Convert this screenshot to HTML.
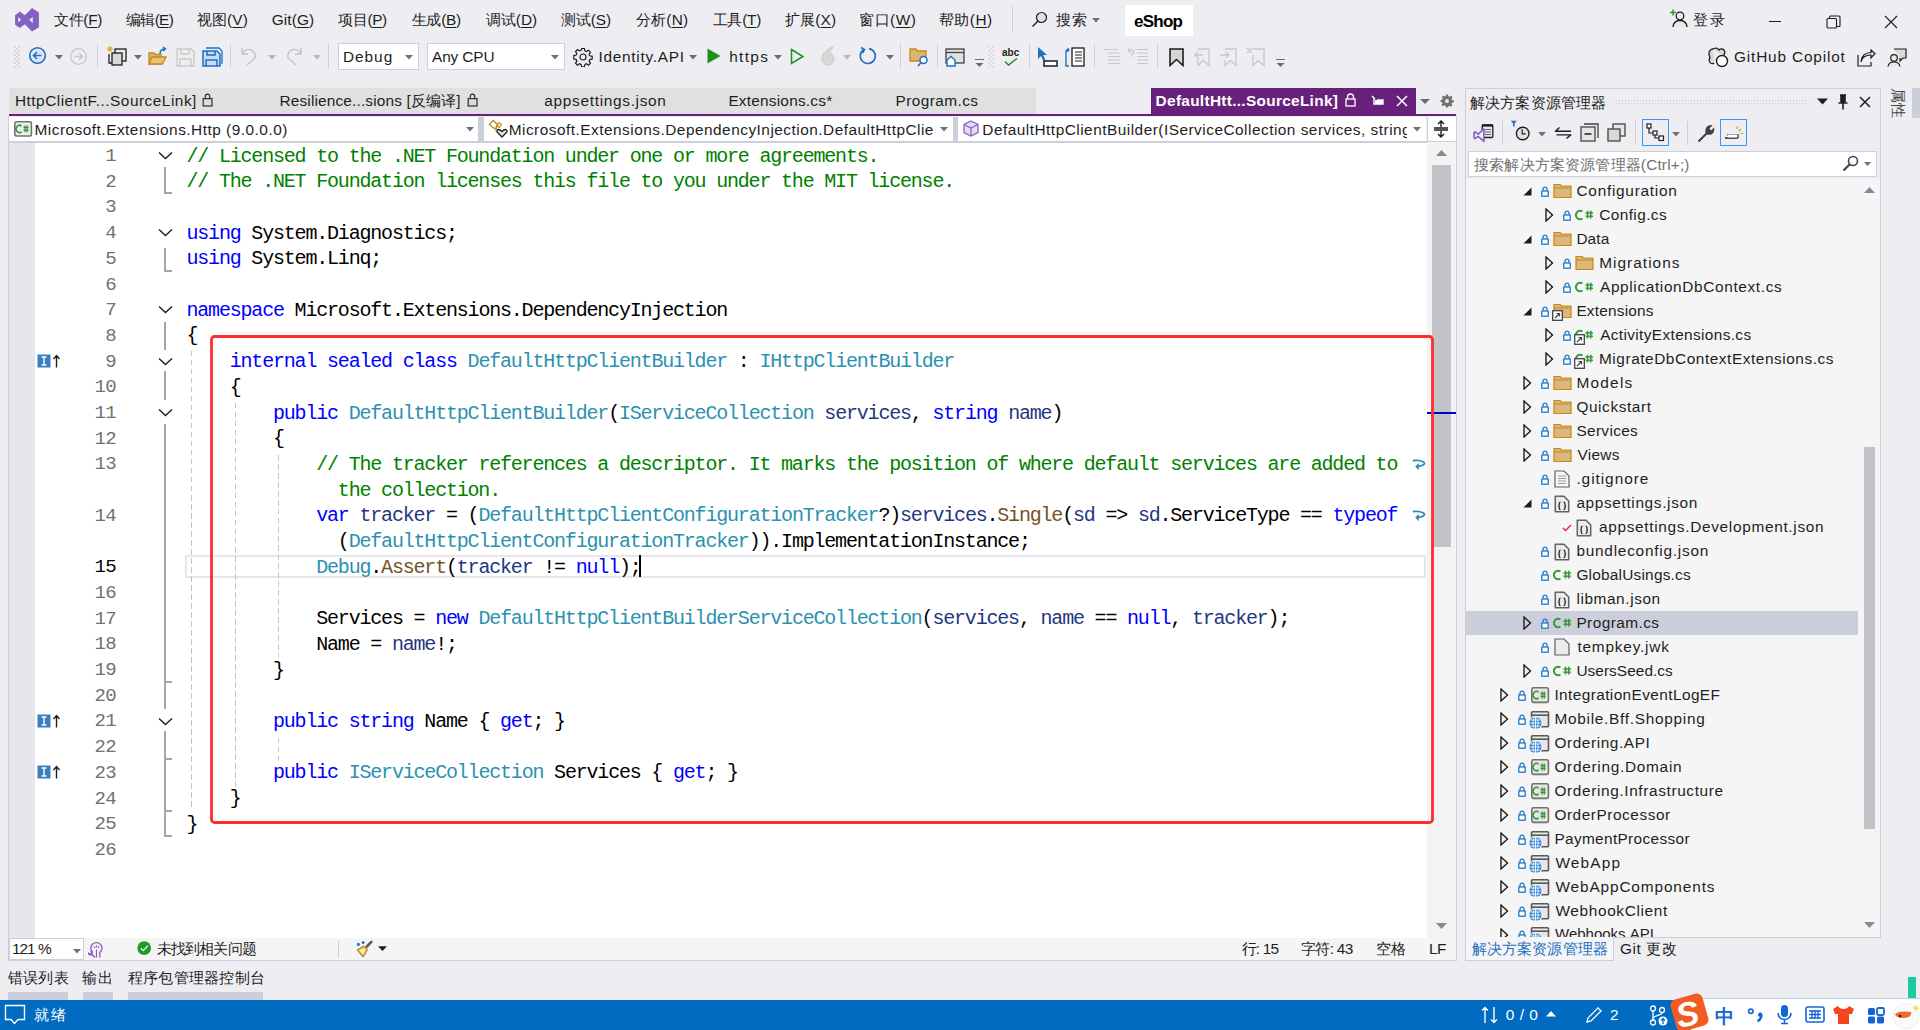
<!DOCTYPE html>
<html><head><meta charset="utf-8">
<style>
*{margin:0;padding:0;box-sizing:border-box}
html,body{width:1920px;height:1030px;overflow:hidden;background:#eeeef2;font-family:"Liberation Sans",sans-serif;color:#1e1e1e;position:relative}
.a{position:absolute}
.ui{font-size:15px;white-space:nowrap}
.menu span{position:absolute;top:10px;font-size:15px;white-space:nowrap}
u{text-decoration:underline;text-underline-offset:2px}
/* editor */
#editor{position:absolute;left:9px;top:142px;width:1447px;height:796px;background:#fff;overflow:hidden}
#code{position:absolute;left:177.5px;top:1.5px;font-family:"Liberation Mono",monospace;font-size:20px;letter-spacing:-1.192px;color:#000}
.cr{position:absolute;left:0;height:25.7px;line-height:25.7px;white-space:pre}
.k{color:#0000ff}.t{color:#2b91af}.c{color:#008000}.l{color:#1f377f}.m{color:#74531f}
.ln{position:absolute;right:0;width:60px;text-align:right;font-family:"Liberation Mono",monospace;font-size:19px;letter-spacing:-0.6px;color:#717171;height:25.7px;line-height:25.7px}
#lnum{position:absolute;left:47px;top:2px;width:60px}
.tree div{position:absolute;height:24px;line-height:24px;font-size:15px;white-space:nowrap}
</style></head><body>

<!-- ===== MENU BAR ===== -->
<svg class="a" style="left:0;top:0" width="45" height="36"><path d="M15.1 15.2L19.9 11.6L24.75 15.2L32 8L38.9 12.4V27.3L32 31.6L24.75 24.2L19.9 28L15.1 24.7Z" fill="#8661c5"/><path d="M18.2 17L21 19.8L18.2 22.6Z M32.8 16.9L29.25 19.8L32.8 23.1Z" fill="#eeeef2"/></svg>

<span class="a ui" style="left:54.0px;top:10.46px;font-size:15.4px;letter-spacing:-0.325px;line-height:20px;">文件(<u>F</u>)</span>
<span class="a ui" style="left:126.0px;top:10.46px;font-size:15.4px;letter-spacing:-0.675px;line-height:20px;">编辑(<u>E</u>)</span>
<span class="a ui" style="left:196.7px;top:10.46px;font-size:15.4px;letter-spacing:0.15px;line-height:20px;">视图(<u>V</u>)</span>
<span class="a ui" style="left:271.7px;top:10.46px;font-size:15.4px;letter-spacing:0.1px;line-height:20px;">Git(<u>G</u>)</span>
<span class="a ui" style="left:338.3px;top:10.46px;font-size:15.4px;letter-spacing:-0.4px;line-height:20px;">项目(<u>P</u>)</span>
<span class="a ui" style="left:411.7px;top:10.46px;font-size:15.4px;letter-spacing:-0.25px;line-height:20px;">生成(<u>B</u>)</span>
<span class="a ui" style="left:486.0px;top:10.46px;font-size:15.4px;letter-spacing:-0.075px;line-height:20px;">调试(<u>D</u>)</span>
<span class="a ui" style="left:560.7px;top:10.46px;font-size:15.4px;letter-spacing:0.0px;line-height:20px;">测试(<u>S</u>)</span>
<span class="a ui" style="left:636.0px;top:10.46px;font-size:15.4px;letter-spacing:0.175px;line-height:20px;">分析(<u>N</u>)</span>
<span class="a ui" style="left:712.7px;top:10.46px;font-size:15.4px;letter-spacing:-0.25px;line-height:20px;">工具(<u>T</u>)</span>
<span class="a ui" style="left:784.7px;top:10.46px;font-size:15.4px;letter-spacing:0.25px;line-height:20px;">扩展(<u>X</u>)</span>
<span class="a ui" style="left:859.0px;top:10.46px;font-size:15.4px;letter-spacing:0.5px;line-height:20px;">窗口(<u>W</u>)</span>
<span class="a ui" style="left:939.0px;top:10.46px;font-size:15.4px;letter-spacing:0.425px;line-height:20px;">帮助(<u>H</u>)</span>



<!-- ===== MENU RIGHT ===== -->
<div class="a" style="left:1012px;top:6px;width:1px;height:25px;background:#ccceDB"></div>
<svg class="a" style="left:1031px;top:11px" width="17" height="17" viewBox="0 0 17 17"><circle cx="10.5" cy="6.5" r="5" fill="#e0e0e0" stroke="#1e1e1e" stroke-width="1.2"/><path d="M7 10 L1.5 15.5" stroke="#1e1e1e" stroke-width="1.5"/></svg>
<span class="a ui" style="left:1056.0px;top:10.46px;font-size:15.4px;letter-spacing:1.0px;line-height:20px;">搜索</span>
<svg class="a" style="left:1092px;top:18px" width="8" height="5"><path d="M0 0H8L4 4.5Z" fill="#717171"/></svg>
<div class="a" style="left:1125px;top:5px;width:68px;height:31px;background:#fff"></div>
<span class="a ui" style="left:1134.0px;top:11.61px;font-size:17px;letter-spacing:-0.75px;line-height:20px;color:#000;font-weight:bold">eShop</span>
<svg class="a" style="left:1669px;top:8px" width="20" height="20" viewBox="0 0 20 20"><path d="M4 1.5V7.5M1 4.5H7" stroke="#1e9e1e" stroke-width="1.4"/><circle cx="11" cy="8" r="3.8" fill="#e8e8e8" stroke="#1e1e1e" stroke-width="1.3"/><path d="M4 19 C4.5 14 7.5 12.5 11 12.5 C14.5 12.5 17.5 14 18 19" fill="#e8e8e8" stroke="#1e1e1e" stroke-width="1.3"/></svg>
<span class="a ui" style="left:1693.0px;top:10.46px;font-size:15.4px;letter-spacing:1.5px;line-height:20px;">登录</span>
<div class="a" style="left:1769px;top:21px;width:12px;height:1px;background:#1e1e1e"></div>
<svg class="a" style="left:1826px;top:15px" width="15" height="14" viewBox="0 0 15 14"><rect x="1" y="3.5" width="9.5" height="9.5" rx="1" fill="none" stroke="#1e1e1e" stroke-width="1.1"/><path d="M3.5 3.5V2A1 1 0 0 1 4.5 1H13A1 1 0 0 1 14 2V10.5A1 1 0 0 1 13 11.5H10.5" fill="none" stroke="#1e1e1e" stroke-width="1.1"/></svg>
<svg class="a" style="left:1884px;top:15px" width="14" height="14" viewBox="0 0 14 14"><path d="M1 1L13 13M13 1L1 13" stroke="#1e1e1e" stroke-width="1.1"/></svg>

<!-- ===== TOOLBAR ===== -->
<svg class="a" style="left:14px;top:46px" width="6" height="22"><g fill="#b4b4bc"><circle cx="1" cy="1" r=".7"/><circle cx="5" cy="1" r=".7"/><circle cx="3" cy="3" r=".7"/><circle cx="1" cy="5" r=".7"/><circle cx="5" cy="5" r=".7"/><circle cx="3" cy="7" r=".7"/><circle cx="1" cy="9" r=".7"/><circle cx="5" cy="9" r=".7"/><circle cx="3" cy="11" r=".7"/><circle cx="1" cy="13" r=".7"/><circle cx="5" cy="13" r=".7"/><circle cx="3" cy="15" r=".7"/><circle cx="1" cy="17" r=".7"/><circle cx="5" cy="17" r=".7"/><circle cx="3" cy="19" r=".7"/><circle cx="1" cy="21" r=".7"/><circle cx="5" cy="21" r=".7"/></g></svg>
<svg class="a" style="left:28px;top:46px" width="19" height="19" viewBox="0 0 19 19"><circle cx="9.5" cy="9.5" r="7.8" fill="#dce6f2" stroke="#1f6fc4" stroke-width="1.6"/><path d="M13.5 9.5H5.5M9 6L5.5 9.5L9 13" fill="none" stroke="#1f6fc4" stroke-width="1.6"/></svg>
<svg class="a" style="left:55px;top:55px" width="8" height="5"><path d="M0 0H8L4 4.5Z" fill="#6b6b6b"/></svg>
<svg class="a" style="left:69px;top:47px" width="19" height="19" viewBox="0 0 19 19"><circle cx="9.5" cy="9.5" r="7.8" fill="none" stroke="#c6c6c6" stroke-width="1.3"/><path d="M5.5 9.5H13.5M10 6L13.5 9.5L10 13" fill="none" stroke="#c6c6c6" stroke-width="1.3"/></svg>
<div class="a" style="left:97px;top:44px;width:1px;height:24px;background:#ccceDB"></div>
<svg class="a" style="left:106px;top:45px" width="22" height="22" viewBox="0 0 22 22"><path d="M4 1V7M1 4H7M2 2L6 6M6 2L2 6" stroke="#d4a017" stroke-width="1"/><rect x="9" y="4" width="11" height="12" fill="#e8e8e8" stroke="#1e1e1e" stroke-width="1.3"/><rect x="6" y="8" width="10" height="12" fill="#d8d8d8" stroke="#1e1e1e" stroke-width="1.3"/><path d="M3 9V18H6" fill="none" stroke="#1e1e1e" stroke-width="1.3"/></svg>
<svg class="a" style="left:134px;top:55px" width="8" height="5"><path d="M0 0H8L4 4.5Z" fill="#6b6b6b"/></svg>
<svg class="a" style="left:148px;top:46px" width="21" height="20" viewBox="0 0 21 20"><path d="M1 7H6L7.5 8.5H13V18H1Z" fill="#dcb46a" stroke="#c28a1c" stroke-width="1.3"/><path d="M1 18L4 11H18L14.5 18Z" fill="#e8c27a" stroke="#c28a1c" stroke-width="1.3"/><path d="M12 8C12 5 14 3 17 3M15 1L17.5 3L15 5" fill="none" stroke="#1f6fc4" stroke-width="1.5"/></svg>
<svg class="a" style="left:176px;top:48px" width="19" height="19" viewBox="0 0 19 19"><path d="M1 1H15L18 4V18H1Z" fill="none" stroke="#c8c8c8" stroke-width="1.3"/><path d="M5 1V6H13V1M4 18V11H15V18" fill="none" stroke="#c8c8c8" stroke-width="1.3"/></svg>
<svg class="a" style="left:202px;top:47px" width="21" height="20" viewBox="0 0 21 20"><path d="M4 1H17L20 4V17" fill="none" stroke="#1f6fc4" stroke-width="1.3"/><path d="M1 4H15L18 7V19H1Z" fill="#c6dcf2" stroke="#1f6fc4" stroke-width="1.5"/><path d="M5 4V8H13V4M4 19V13H15V19" fill="none" stroke="#1f6fc4" stroke-width="1.5"/></svg>
<div class="a" style="left:230px;top:44px;width:1px;height:24px;background:#ccceDB"></div>
<svg class="a" style="left:240px;top:47px" width="18" height="19" viewBox="0 0 18 19"><path d="M2 1V7H8" fill="none" stroke="#c2c2c2" stroke-width="1.3"/><path d="M2 7C4 3 7 2 10 2.5C14 3.5 16 7 15 11L7 18" fill="none" stroke="#c2c2c2" stroke-width="1.3"/></svg>
<svg class="a" style="left:268px;top:55px" width="8" height="5"><path d="M0 0H8L4 4.5Z" fill="#b8b8b8"/></svg>
<svg class="a" style="left:285px;top:47px" width="18" height="19" viewBox="0 0 18 19"><path d="M16 1V7H10" fill="none" stroke="#c2c2c2" stroke-width="1.3"/><path d="M16 7C14 3 11 2 8 2.5C4 3.5 2 7 3 11L11 18" fill="none" stroke="#c2c2c2" stroke-width="1.3"/></svg>
<svg class="a" style="left:313px;top:55px" width="8" height="5"><path d="M0 0H8L4 4.5Z" fill="#b8b8b8"/></svg>
<div class="a" style="left:328px;top:44px;width:1px;height:24px;background:#ccceDB"></div>
<div class="a" style="left:338px;top:43px;width:81px;height:27px;background:#fff;border:1px solid #ccceDB"></div>
<span class="a ui" style="left:342.9px;top:46.56px;font-size:15.4px;letter-spacing:1.0px;line-height:20px;">Debug</span>
<svg class="a" style="left:405px;top:55px" width="8" height="5"><path d="M0 0H8L4 4.5Z" fill="#717171"/></svg>
<div class="a" style="left:427px;top:43px;width:138px;height:27px;background:#fff;border:1px solid #ccceDB"></div>
<span class="a ui" style="left:432.0px;top:46.56px;font-size:15.4px;letter-spacing:-0.117px;line-height:20px;">Any CPU</span>
<svg class="a" style="left:551px;top:55px" width="8" height="5"><path d="M0 0H8L4 4.5Z" fill="#717171"/></svg>
<svg class="a" style="left:573px;top:47px" width="20" height="20" viewBox="0 0 20 20"><path d="M8.6 1.5h2.8l.5 2.4 1.6.7 2-1.4 2 2-1.4 2 .7 1.6 2.4.5v2.8l-2.4.5-.7 1.6 1.4 2-2 2-2-1.4-1.6.7-.5 2.4H8.6l-.5-2.4-1.6-.7-2 1.4-2-2 1.4-2-.7-1.6-2.4-.5V8.6l2.4-.5.7-1.6-1.4-2 2-2 2 1.4 1.6-.7z" fill="none" stroke="#1e1e1e" stroke-width="1.2"/><circle cx="10" cy="10" r="3" fill="none" stroke="#1e1e1e" stroke-width="1.2"/></svg>
<span class="a ui" style="left:598.5px;top:46.56px;font-size:15.4px;letter-spacing:0.718px;line-height:20px;">Identity.API</span>
<svg class="a" style="left:689px;top:55px" width="8" height="5"><path d="M0 0H8L4 4.5Z" fill="#6b6b6b"/></svg>
<svg class="a" style="left:707px;top:48px" width="14" height="16"><path d="M0.5 0.5L13.5 8L0.5 15.5Z" fill="#1e8e1e"/></svg>
<span class="a ui" style="left:729.2px;top:46.56px;font-size:15.4px;letter-spacing:1.35px;line-height:20px;">https</span>
<svg class="a" style="left:774px;top:55px" width="8" height="5"><path d="M0 0H8L4 4.5Z" fill="#6b6b6b"/></svg>
<svg class="a" style="left:790px;top:48px" width="15" height="17"><path d="M1.5 1.5L13 8.5L1.5 15.5Z" fill="none" stroke="#1e8e1e" stroke-width="1.5"/></svg>
<svg class="a" style="left:818px;top:46px" width="19" height="20" viewBox="0 0 19 20"><path d="M15 1C9 3 4 7 4 13C4 17 7 19 10 19C14 19 16 16 16 13C16 10 14 9 13 7C12 10 11 11 10 11C10 7 13 4 15 1Z" fill="#d8d8d8" stroke="#c8c8c8"/></svg>
<svg class="a" style="left:843px;top:55px" width="8" height="5"><path d="M0 0H8L4 4.5Z" fill="#b8b8b8"/></svg>
<svg class="a" style="left:858px;top:46px" width="20" height="20" viewBox="0 0 20 20"><path d="M6 3.5A7.5 7.5 0 1 0 11 2.6" fill="none" stroke="#1f6fc4" stroke-width="1.6"/><path d="M3 1.5L6.5 3.5L4.5 7" fill="none" stroke="#1f6fc4" stroke-width="1.6"/></svg>
<svg class="a" style="left:886px;top:55px" width="8" height="5"><path d="M0 0H8L4 4.5Z" fill="#6b6b6b"/></svg>
<div class="a" style="left:900px;top:44px;width:1px;height:24px;background:#ccceDB"></div>
<svg class="a" style="left:909px;top:48px" width="21" height="19" viewBox="0 0 21 19"><path d="M1 1H7L8.5 3H17V13H1Z" fill="#dcb46a" stroke="#c28a1c" stroke-width="1.3"/><circle cx="14.5" cy="12" r="3.5" fill="#fff" stroke="#1f6fc4" stroke-width="1.5"/><path d="M12 14.5L9 18" stroke="#1f6fc4" stroke-width="1.8"/></svg>
<div class="a" style="left:937px;top:44px;width:1px;height:24px;background:#ccceDB"></div>
<svg class="a" style="left:945px;top:48px" width="21" height="19" viewBox="0 0 21 19"><rect x="1" y="1" width="18" height="14" fill="#e0e0e0" stroke="#424242" stroke-width="1.3"/><path d="M1 4.5H19" stroke="#424242" stroke-width="1.3"/><path d="M2 12L6 8.5L10 12V18H2Z" fill="#fff" stroke="#1f6fc4" stroke-width="1.4"/></svg>
<svg class="a" style="left:975px;top:59px" width="9" height="9"><path d="M0 0H9V1H0Z M0.5 4H8.5L4.5 8Z" fill="#6b6b6b"/></svg>
<svg class="a" style="left:988px;top:46px" width="6" height="22"><g fill="#c0c0c8"><circle cx="1" cy="1" r=".7"/><circle cx="5" cy="1" r=".7"/><circle cx="3" cy="3" r=".7"/><circle cx="1" cy="5" r=".7"/><circle cx="5" cy="5" r=".7"/><circle cx="3" cy="7" r=".7"/><circle cx="1" cy="9" r=".7"/><circle cx="5" cy="9" r=".7"/><circle cx="3" cy="11" r=".7"/><circle cx="1" cy="13" r=".7"/><circle cx="5" cy="13" r=".7"/><circle cx="3" cy="15" r=".7"/><circle cx="1" cy="17" r=".7"/><circle cx="5" cy="17" r=".7"/><circle cx="3" cy="19" r=".7"/><circle cx="1" cy="21" r=".7"/><circle cx="5" cy="21" r=".7"/></g></svg>
<span class="a" style="left:1002px;top:47px;font-size:10px;font-weight:bold;color:#1e1e1e">abc</span>
<svg class="a" style="left:1004px;top:58px" width="14" height="8"><path d="M1 3.5L4.5 7L13 0.5" fill="none" stroke="#1e8e1e" stroke-width="1.5"/></svg>
<div class="a" style="left:1029px;top:44px;width:1px;height:24px;background:#ccceDB"></div>
<svg class="a" style="left:1037px;top:46px" width="22" height="21" viewBox="0 0 22 21"><path d="M1 1L1 13L4 10L6.5 15L8.5 14L6 9H10Z" fill="#1f6fc4"/><rect x="7" y="15" width="13" height="5" fill="#fff" stroke="#1e1e1e" stroke-width="1.5"/></svg>
<svg class="a" style="left:1064px;top:47px" width="21" height="20" viewBox="0 0 21 20"><path d="M4 4H2V19H5" fill="none" stroke="#1f6fc4" stroke-width="1.4"/><path d="M4 5V2M2.5 3.5L4 1.5L5.5 3.5" fill="none" stroke="#1f6fc4" stroke-width="1.2"/><rect x="8" y="1" width="12" height="18" fill="#fff" stroke="#1e1e1e" stroke-width="1.3"/><path d="M11 5H18M11 8H18M11 11H18M11 14H18" stroke="#1e1e1e" stroke-width="1.2"/></svg>
<div class="a" style="left:1094px;top:44px;width:1px;height:24px;background:#ccceDB"></div>
<svg class="a" style="left:1103px;top:48px" width="18" height="17"><path d="M1 1.5H15M5 5H17M5 8.5H17M5 12H17M5 15.5H17" stroke="#c8c8c8" stroke-width="1.2"/></svg>
<svg class="a" style="left:1128px;top:47px" width="21" height="18"><path d="M7 2.5H20M9 6H20M9 9.5H20M9 13H20M9 16.5H20" stroke="#c8c8c8" stroke-width="1.2"/><path d="M1 5C1 2 6 2 6 5C6 7 3 7 3 10M1 1V5H4" fill="none" stroke="#c8c8c8" stroke-width="1.2"/></svg>
<div class="a" style="left:1157px;top:44px;width:1px;height:24px;background:#ccceDB"></div>
<svg class="a" style="left:1169px;top:48px" width="15" height="19"><path d="M1 1H14V17.5L7.5 11.5L1 17.5Z" fill="#d6d6d6" stroke="#1e1e1e" stroke-width="1.6"/></svg>
<svg class="a" style="left:1194px;top:48px" width="17" height="19"><path d="M4 1H15V17.5L9.5 12.5L4 17.5V9M9 7H1M4 4L1 7L4 10" fill="none" stroke="#c8c8c8" stroke-width="1.3"/></svg>
<svg class="a" style="left:1219px;top:48px" width="19" height="19"><path d="M6 1H17V17.5L11.5 12.5L6 17.5V12M1 7H10M7 4L10 7L7 10" fill="none" stroke="#c8c8c8" stroke-width="1.3"/></svg>
<svg class="a" style="left:1246px;top:47px" width="20" height="20"><path d="M7 2H18V18.5L12.5 13.5L7 18.5V8M1 1L6 6M6 1L1 6" fill="none" stroke="#c8c8c8" stroke-width="1.3"/></svg>
<svg class="a" style="left:1276px;top:59px" width="9" height="9"><path d="M0 0H9V1H0Z M0.5 4H8.5L4.5 8Z" fill="#6b6b6b"/></svg>
<svg class="a" style="left:1708px;top:47px" width="22" height="21" viewBox="0 0 22 21"><path d="M5 2C2.5 2 1 4 1 6.5C1 9 2 10 2 11C1 12 1 14 2 15.5C3 17 5 17 6 16" fill="#d8d8d8" stroke="#1e1e1e" stroke-width="1.3"/><path d="M5 2C8 0.5 10 1.5 11 3C12.5 1.5 15.5 1.5 16.5 4C17 6 16.5 8 15 9" fill="#d8d8d8" stroke="#1e1e1e" stroke-width="1.3"/><circle cx="14" cy="14" r="5.5" fill="#fff" stroke="#1e1e1e" stroke-width="1.4"/></svg>
<span class="a ui" style="left:1734.0px;top:47.16px;font-size:15.4px;letter-spacing:0.831px;line-height:20px;">GitHub Copilot</span>
<svg class="a" style="left:1857px;top:49px" width="19" height="18" viewBox="0 0 19 18"><path d="M1 6V17H14V13" fill="none" stroke="#1e1e1e" stroke-width="1.2"/><path d="M4 13C5 8 9 6 14 6V9L18 4.5L14 1V3.5C8 3.5 4.5 7 4 13Z" fill="#e0e0e0" stroke="#1e1e1e" stroke-width="1.2"/></svg>
<svg class="a" style="left:1887px;top:48px" width="20" height="19" viewBox="0 0 20 19"><path d="M7 1H19V10H16L13 13V10" fill="#dadada" stroke="#1e1e1e" stroke-width="1.2"/><circle cx="7" cy="10" r="3.3" fill="#e8e8e8" stroke="#1e1e1e" stroke-width="1.2"/><path d="M1 18.5C1.5 15.5 4 14 7 14C10 14 12.5 15.5 13 18.5" fill="#e8e8e8" stroke="#1e1e1e" stroke-width="1.2"/></svg>


<!-- ===== DOC TABS ===== -->
<div class="a" style="left:9px;top:88px;width:1027px;height:26px;background:#e0e0e0"></div>
<span class="a ui" style="left:14.9px;top:90.56px;font-size:15.4px;letter-spacing:0.504px;line-height:20px;">HttpClientF...SourceLink]</span>
<svg class="a" style="left:202px;top:93px" width="11" height="14" viewBox="0 0 11 14"><path d="M3.3 5.8V3.6A2.2 2.4 0 0 1 7.7 3.6V5.8" fill="none" stroke="#303030" stroke-width="1.2"/><rect x="1.2" y="5.6" width="8.8" height="7.4" fill="#dadada" stroke="#303030" stroke-width="1.2"/></svg>
<span class="a ui" style="left:279.5px;top:90.56px;font-size:15.4px;letter-spacing:0.152px;line-height:20px;">Resilience...sions [反编译]</span>
<svg class="a" style="left:467px;top:93px" width="11" height="14" viewBox="0 0 11 14"><path d="M3.3 5.8V3.6A2.2 2.4 0 0 1 7.7 3.6V5.8" fill="none" stroke="#303030" stroke-width="1.2"/><rect x="1.2" y="5.6" width="8.8" height="7.4" fill="#dadada" stroke="#303030" stroke-width="1.2"/></svg>
<span class="a ui" style="left:544.3px;top:90.56px;font-size:15.4px;letter-spacing:0.693px;line-height:20px;">appsettings.json</span>
<span class="a ui" style="left:728.4px;top:90.56px;font-size:15.4px;letter-spacing:0.215px;line-height:20px;">Extensions.cs*</span>
<span class="a ui" style="left:895.6px;top:90.56px;font-size:15.4px;letter-spacing:0.411px;line-height:20px;">Program.cs</span>
<div class="a" style="left:1151px;top:88px;width:265px;height:26px;background:#68217a"></div>
<span class="a ui" style="left:1155.6px;top:90.56px;font-size:15.4px;letter-spacing:0.304px;line-height:20px;color:#fff;font-weight:bold">DefaultHtt...SourceLink]</span>
<svg class="a" style="left:1345px;top:93px" width="11" height="14" viewBox="0 0 11 14"><path d="M2.5 6V4A3 3 0 0 1 8.5 4V6" fill="none" stroke="#fff" stroke-width="1.3"/><rect x="1" y="6" width="9" height="7" fill="none" stroke="#fff" stroke-width="1.3"/></svg>
<svg class="a" style="left:1371px;top:95px" width="13" height="11" viewBox="0 0 13 11"><path d="M1 1L4 4M3 3V9H12V5H6" fill="none" stroke="#fff" stroke-width="1.4"/><rect x="4" y="5" width="8" height="4" fill="#fff"/></svg>
<svg class="a" style="left:1396px;top:95px" width="12" height="12"><path d="M1 1L11 11M11 1L1 11" stroke="#fff" stroke-width="1.5"/></svg>
<svg class="a" style="left:1420px;top:99px" width="10" height="6"><path d="M0 0H10L5 5Z" fill="#6b6b6b"/></svg>
<svg class="a" style="left:1440px;top:94px" width="14" height="14" viewBox="0 0 14 14"><path d="M6 0.5h2l.4 1.8 1.2.5 1.5-1 1.4 1.4-1 1.5.5 1.2 1.8.4v2l-1.8.4-.5 1.2 1 1.5-1.4 1.4-1.5-1-1.2.5L8 13.5H6l-.4-1.8-1.2-.5-1.5 1-1.4-1.4 1-1.5-.5-1.2L.5 8V6l1.8-.4.5-1.2-1-1.5 1.4-1.4 1.5 1 1.2-.5z" fill="#717171"/><circle cx="7" cy="7" r="2" fill="#eeeef2"/></svg>
<div class="a" style="left:9px;top:114px;width:1447px;height:2px;background:#68217a"></div>

<!-- ===== NAV BAR ===== -->
<div class="a" style="left:9px;top:116px;width:1447px;height:26px;background:#eeeef2;border-bottom:1px solid #ccceDB"></div>
<div class="a" style="left:9px;top:117px;width:469px;height:24px;background:#fff"></div>
<div class="a" style="left:478px;top:117px;width:6px;height:24px;background:#ccceDB"></div>
<div class="a" style="left:484px;top:117px;width:469px;height:24px;background:#fff"></div>
<div class="a" style="left:953px;top:117px;width:5px;height:24px;background:#ccceDB"></div>
<div class="a" style="left:958px;top:117px;width:468px;height:24px;background:#fff"></div>
<div class="a" style="left:1427px;top:117px;width:29px;height:24px;background:#fff;border-left:1px solid #ccceDB"></div>
<svg class="a" style="left:13px;top:120px" width="20" height="18"><rect x="1.8" y="1.8" width="16.6" height="14.2" rx="1.6" fill="#efefef" stroke="#717171" stroke-width="1.6"/><path d="M8.6 6.1A3.4 3.6 0 1 0 8.6 11.7" fill="none" stroke="#2e9a2e" stroke-width="1.5"/><path d="M10.4 7.4H15.6M10.4 10.2H15.6M12 5.4V12.2M14.2 5.4V12.2" stroke="#2e9a2e" stroke-width="1.3"/></svg>
<span class="a ui" style="left:34.5px;top:119.66px;font-size:15.4px;letter-spacing:0.493px;line-height:20px;">Microsoft.Extensions.Http (9.0.0.0)</span>
<svg class="a" style="left:466px;top:127px" width="8" height="5"><path d="M0 0H8L4 4.5Z" fill="#717171"/></svg>
<svg class="a" style="left:488px;top:119px" width="20" height="19" viewBox="0 0 20 19"><path d="M1.5 5.5L5 1.5L10 6L7 10Z" fill="none" stroke="#c28a1c" stroke-width="1.3"/><path d="M8.5 7L10.5 3.5L13.5 5.5L11.5 8.5Z M8.5 8L8 13" fill="none" stroke="#c28a1c" stroke-width="1.1"/><path d="M14 18L9.5 13.5C8.5 12.5 9 10.5 10.8 10.5C12 10.5 13 11.5 14 12.5C15 11.5 16 10.5 17.2 10.5C19 10.5 19.5 12.5 18.5 13.5Z" fill="#e0e0e0" stroke="#1e1e1e" stroke-width="1.3"/></svg>
<span class="a ui" style="left:508.7px;top:119.66px;font-size:15.4px;letter-spacing:0.49px;line-height:20px;width:425px;overflow:hidden">Microsoft.Extensions.DependencyInjection.DefaultHttpClientBuilder</span>
<svg class="a" style="left:940px;top:127px" width="8" height="5"><path d="M0 0H8L4 4.5Z" fill="#717171"/></svg>
<svg class="a" style="left:963px;top:120px" width="16" height="17" viewBox="0 0 16 17"><path d="M8 1L15 4.5V12.5L8 16L1 12.5V4.5Z" fill="#e6dcf2" stroke="#8661c5" stroke-width="1.3"/><path d="M1 4.5L8 8L15 4.5M8 8V16" fill="none" stroke="#8661c5" stroke-width="1.3"/></svg>
<span class="a ui" style="left:982.3px;top:119.66px;font-size:15.4px;letter-spacing:0.49px;line-height:20px;width:425px;overflow:hidden">DefaultHttpClientBuilder(IServiceCollection services, string name)</span>
<svg class="a" style="left:1413px;top:127px" width="8" height="5"><path d="M0 0H8L4 4.5Z" fill="#717171"/></svg>
<svg class="a" style="left:1433px;top:120px" width="16" height="18" viewBox="0 0 16 18"><path d="M1 8H15M1 10H15M8 1V7M8 11V17M5 4L8 1L11 4M5 14L8 17L11 14" fill="none" stroke="#1e1e1e" stroke-width="1.4"/></svg>


<!-- ===== EDITOR STATUS STRIP ===== -->
<div class="a" style="left:9px;top:938px;width:1447px;height:23px;background:#f5f5f5;border-bottom:1px solid #ccceDB"></div>
<div class="a" style="left:9px;top:938px;width:75px;height:22px;background:#fff;border:1px solid #ccceDB"></div>
<span class="a ui" style="left:11.9px;top:939.26px;font-size:15.4px;letter-spacing:-0.975px;line-height:20px;">121 %</span>
<svg class="a" style="left:73px;top:949px" width="8" height="5"><path d="M0 0H8L4 4.5Z" fill="#717171"/></svg>
<svg class="a" style="left:86px;top:939px" width="20" height="20" viewBox="0 0 20 20"><path d="M7 13.5C5.5 12.5 4.8 11 4.8 9.2A5.6 5.6 0 0 1 16 9.2C16 11.2 15 12.6 13.8 13.6V18.5" fill="none" stroke="#8a5cc6" stroke-width="1.3"/><path d="M10.5 18.5V10.5M8.2 7.2L8.8 9M10.5 6.2V8.2M12.8 7.2L12.2 9" fill="none" stroke="#8a5cc6" stroke-width="1.2"/><path d="M2.2 13.2C1.7 14.5 2.2 16 3.5 16.5C4.3 16.8 5.1 16.6 5.6 16.2L8.6 19L9.6 18L6.6 15.2C7 14.6 7.1 13.8 6.8 13.1C6.3 12 5 11.6 4 11.9L5.3 13.3L4.3 14.3Z" fill="#8a5cc6"/></svg>
<svg class="a" style="left:137px;top:941px" width="15" height="15"><circle cx="7.2" cy="7.1" r="6.9" fill="#1f9a2a"/><path d="M3.8 7.3L6.2 9.6L10.8 4.8" fill="none" stroke="#e8f5e8" stroke-width="1.3"/></svg>
<span class="a ui" style="left:156.9px;top:939.26px;font-size:15.4px;letter-spacing:-0.85px;line-height:20px;">未找到相关问题</span>
<div class="a" style="left:338px;top:941px;width:1px;height:17px;background:#ccceDB"></div>
<svg class="a" style="left:350px;top:936px" width="40" height="26"><path d="M21.3 5.9L16.6 10.9" stroke="#5a5a5a" stroke-width="2.6" stroke-linecap="round"/><path d="M7.5 14L13.75 10.3L17.2 13.75L13.1 20.6Z" fill="#efe4c4" stroke="#c8961e" stroke-width="1.7" stroke-linejoin="round"/><circle cx="8.4" cy="8.4" r="1.6" fill="#1f7ad0"/><circle cx="13.1" cy="6.6" r="1.4" fill="#1a5c9c"/><path d="M28.1 10.3H36.9L32.5 15Z" fill="#1e1e1e"/></svg>

<span class="a ui" style="left:1241.7px;top:939.26px;font-size:15.4px;letter-spacing:-0.825px;line-height:20px;">行: 15</span>
<span class="a ui" style="left:1301.0px;top:939.26px;font-size:15.4px;letter-spacing:-0.68px;line-height:20px;">字符: 43</span>
<span class="a ui" style="left:1375.6px;top:939.26px;font-size:15.4px;letter-spacing:0.4px;line-height:20px;">空格</span>
<span class="a ui" style="left:1429.0px;top:939.26px;font-size:15.4px;letter-spacing:-0.6px;line-height:20px;">LF</span>

<!-- ===== BOTTOM TOOL TABS ===== -->
<span class="a ui" style="left:7.9px;top:968.16px;font-size:15.4px;letter-spacing:0.267px;line-height:20px;">错误列表</span>
<span class="a ui" style="left:81.9px;top:968.16px;font-size:15.4px;letter-spacing:1.5px;line-height:20px;">输出</span>
<span class="a ui" style="left:127.7px;top:968.16px;font-size:15.4px;letter-spacing:0.275px;line-height:20px;">程序包管理器控制台</span>
<div class="a" style="left:8px;top:992px;width:60px;height:8px;background:#ccceDB"></div>
<div class="a" style="left:83px;top:992px;width:30px;height:8px;background:#ccceDB"></div>
<div class="a" style="left:128px;top:992px;width:135px;height:8px;background:#ccceDB"></div>

<!-- ===== STATUS BAR ===== -->
<div class="a" style="left:0;top:1000px;width:1920px;height:30px;background:#006bc0"></div>
<svg class="a" style="left:4px;top:1004px" width="22" height="22" viewBox="0 0 22 22"><path d="M1.5 1.5H20.5V15.5H14L10.5 19.5L7 15.5H1.5Z" fill="none" stroke="#fff" stroke-width="1.4"/></svg>
<span class="a ui" style="left:34.0px;top:1005.16px;font-size:15.4px;letter-spacing:1.5px;line-height:20px;color:#fff">就绪</span>
<svg class="a" style="left:1481px;top:1006px" width="17" height="18"><path d="M4 17V1.5M1 4.5L4 1.5L7 4.5M13 1V16.5M10 13.5L13 16.5L16 13.5" fill="none" stroke="#fff" stroke-width="1.4"/></svg>
<span class="a ui" style="left:1505.8px;top:1005.36px;font-size:15.4px;letter-spacing:0.525px;line-height:20px;color:#fff">0 / 0</span>
<svg class="a" style="left:1546px;top:1011px" width="10" height="6"><path d="M0 5.5H10L5 0Z" fill="#fff"/></svg>
<svg class="a" style="left:1585px;top:1006px" width="17" height="18"><path d="M2 16L3 12L13 2L16 5L6 15Z" fill="none" stroke="#fff" stroke-width="1.3"/></svg>
<span class="a ui" style="left:1610.0px;top:1005.36px;font-size:15.4px;letter-spacing:0.0px;line-height:20px;color:#fff">2</span>
<svg class="a" style="left:1649px;top:1005px" width="20" height="21" viewBox="0 0 20 21"><circle cx="4" cy="3.5" r="2.5" fill="none" stroke="#fff" stroke-width="1.3"/><circle cx="4" cy="17.5" r="2.5" fill="none" stroke="#fff" stroke-width="1.3"/><circle cx="13" cy="5" r="2.5" fill="none" stroke="#fff" stroke-width="1.3"/><path d="M4 6V15M13 7.5C13 11 4 10 4 14" fill="none" stroke="#fff" stroke-width="1.3"/><circle cx="14" cy="16" r="4.5" fill="#fff"/><path d="M14 19V13.5M12 15.5L14 13.5L16 15.5" fill="none" stroke="#006bc0" stroke-width="1.3"/></svg>


<!-- ===== SOLUTION EXPLORER ===== -->
<div class="a" style="left:1465px;top:88px;width:416px;height:850px;border:1px solid #ccceDB;background:#eeeef2"></div>
<span class="a ui" style="left:1470.0px;top:92.66px;font-size:15.4px;letter-spacing:0.125px;line-height:20px;">解决方案资源管理器</span>
<div class="a" style="left:1615px;top:99px;width:193px;height:6px;background-image:radial-gradient(#c8c8d0 0.8px,transparent 0.9px);background-size:3px 3px"></div>
<svg class="a" style="left:1817px;top:98px" width="11" height="7"><path d="M0 0.5H11L5.5 6.5Z" fill="#1e1e1e"/></svg>
<svg class="a" style="left:1837px;top:94px" width="12" height="16"><path d="M3 1H9M4 1V8M8 1V8M1.5 9H10.5M6 9V15.5" fill="none" stroke="#1e1e1e" stroke-width="1.6"/><rect x="4" y="1" width="4" height="8" fill="#1e1e1e"/></svg>
<svg class="a" style="left:1859px;top:96px" width="12" height="12"><path d="M1 1L11 11M11 1L1 11" stroke="#1e1e1e" stroke-width="1.5"/></svg>
<!-- SE toolbar -->
<svg class="a" style="left:1466px;top:114px" width="30" height="32"><rect x="16.2" y="10.8" width="10.6" height="12.7" rx="1" fill="#e8e8e8" stroke="#1e1e1e" stroke-width="1.3"/><path d="M16 11.5H27" stroke="#1e1e1e" stroke-width="2.2"/><path d="M19 15.5H25M19 18H25M19 20.5H25" stroke="#616161" stroke-width="1.1"/><path transform="translate(0.5,-2.5) scale(0.95)" d="M18.3 18.5L12.2 23.8L9 21.5L8 22.3V27.7L9 28.5L12.2 26.2L18.3 31.5V18.5Z" fill="#eeeef2"/><path transform="translate(0.5,-2.5) scale(0.95)" d="M18.3 18.5L12.2 23.8L9 21.5L8 22.3V27.7L9 28.5L12.2 26.2L18.3 31.5V18.5Z" fill="none" stroke="#8a5cc6" stroke-width="1.7" stroke-linejoin="round"/></svg>
<div class="a" style="left:1502px;top:121px;width:1px;height:24px;background:#ccceDB"></div>
<svg class="a" style="left:1510px;top:120px" width="22" height="22"><path d="M0.8 0.8H6.8L4.6 3.4V6.6L3 6.6V3.4Z" fill="#1f6fc4"/><circle cx="12.7" cy="13.5" r="6.3" fill="#e0e0e0" stroke="#1e1e1e" stroke-width="1.4"/><path d="M12.2 9.2V13.8H15.6" fill="none" stroke="#1e1e1e" stroke-width="1.2"/></svg>
<svg class="a" style="left:1538px;top:132px" width="8" height="5"><path d="M0 0H8L4 4.5Z" fill="#717171"/></svg>
<svg class="a" style="left:1553px;top:125px" width="20" height="16"><path d="M18 6.2H2.5L6.5 2.5" fill="none" stroke="#1e1e1e" stroke-width="1.4" stroke-linejoin="round"/><path d="M3.5 9.9H17.8L13.5 13.5" fill="none" stroke="#1e1e1e" stroke-width="1.4" stroke-linejoin="round"/></svg>
<svg class="a" style="left:1580px;top:123px" width="19" height="19" viewBox="0 0 19 19"><path d="M4 1H18V15" fill="none" stroke="#424242" stroke-width="1.3"/><rect x="1" y="4" width="14" height="14" fill="#e6e6e6" stroke="#424242" stroke-width="1.3"/><path d="M4.5 11H11.5" stroke="#1e1e1e" stroke-width="1.5"/></svg>
<svg class="a" style="left:1607px;top:123px" width="19" height="19" viewBox="0 0 19 19"><rect x="6" y="1" width="12" height="12" fill="#e6e6e6" stroke="#424242" stroke-width="1.3"/><rect x="1" y="6" width="12" height="12" fill="#d8d8d8" stroke="#424242" stroke-width="1.3"/></svg>
<div class="a" style="left:1635px;top:121px;width:1px;height:24px;background:#ccceDB"></div>
<div class="a" style="left:1642px;top:119px;width:27px;height:27px;border:1px solid #3399ff;background:#eeeef2"></div>
<svg class="a" style="left:1646px;top:123px" width="19" height="19" viewBox="0 0 19 19"><rect x="1" y="1" width="4" height="4" fill="#fff" stroke="#1e1e1e" stroke-width="1.2"/><rect x="7" y="8" width="4" height="4" fill="#fff" stroke="#1e1e1e" stroke-width="1.2"/><rect x="13" y="13" width="4.5" height="4.5" fill="#fff" stroke="#1e1e1e" stroke-width="1.2"/><path d="M3 5V10H7M9 12V15H13" fill="none" stroke="#1e1e1e" stroke-width="1.2"/></svg>
<svg class="a" style="left:1672px;top:132px" width="8" height="5"><path d="M0 0H8L4 4.5Z" fill="#717171"/></svg>
<div class="a" style="left:1687px;top:121px;width:1px;height:24px;background:#ccceDB"></div>
<svg class="a" style="left:1697px;top:123px" width="19" height="20" viewBox="0 0 19 20"><path d="M1.5 18.5L9.5 10.5" stroke="#424242" stroke-width="2.2"/><path d="M9 11C7.5 8 8.5 4 11.5 2.5C13 1.8 14.5 1.8 15.5 2.2L12.5 5.5L14 7.5L17 4.5C17.5 6 17.5 8 16.5 9.5C15 12 12 12.5 9 11Z" fill="#424242"/></svg>
<div class="a" style="left:1720px;top:119px;width:27px;height:27px;border:1px solid #3399ff;background:#eeeef2"></div>
<svg class="a" style="left:1724px;top:125px" width="20" height="15" viewBox="0 0 20 15"><path d="M1 13H14M3 10H14V13" fill="none" stroke="#1e1e1e" stroke-width="1.4"/><rect x="3.5" y="9.5" width="10" height="3" fill="#fff"/><path d="M15 6L17 4M16.5 8.5H19M13 4L13 1.5" stroke="#d4a017" stroke-width="1.2"/></svg>
<!-- search box -->
<div class="a" style="left:1468px;top:151px;width:409px;height:26px;background:#fff;border:1px solid #ccceDB"></div>
<span class="a ui" style="left:1474.0px;top:154.66px;font-size:15.4px;letter-spacing:0.167px;line-height:20px;color:#717171">搜索解决方案资源管理器(Ctrl+;)</span>
<svg class="a" style="left:1842px;top:155px" width="17" height="17" viewBox="0 0 17 17"><circle cx="11" cy="6" r="4.5" fill="none" stroke="#424242" stroke-width="1.6"/><path d="M7.8 9.2L1.5 15.5" stroke="#424242" stroke-width="2.2"/></svg>
<svg class="a" style="left:1864px;top:162px" width="7" height="4"><path d="M0 0H7L3.5 4Z" fill="#717171"/></svg>
<!-- tree -->
<div class="a" style="left:1466px;top:179px;width:414px;height:758px;background:#f5f5f5;overflow:hidden">
<div class="a" style="left:-1466px;top:-179px;width:1920px;height:1030px">
<svg class="a" style="left:1523px;top:187px" width="9" height="9"><path d="M8.5 0.5V8.5H0.5Z" fill="#1e1e1e"/></svg>
<svg class="a" style="left:1541px;top:186px" width="8" height="11" viewBox="0 0 8 11"><path d="M2 5V3.2A2 2 0 0 1 6 3.2V5" fill="none" stroke="#1f7ad0" stroke-width="1.3"/><rect x="0.8" y="5" width="6.4" height="5.2" fill="#fff" stroke="#1f7ad0" stroke-width="1.3"/></svg>
<svg class="a" style="left:1553px;top:182px" width="19" height="17" viewBox="0 0 19 17"><path d="M1 2.5H7L8.5 4H18V15.5H1Z" fill="#dcb67a" stroke="#c28a1c" stroke-width="1.2"/><path d="M1 6H18" stroke="#c28a1c" stroke-width="1"/></svg>
<span class="a ui" style="left:1576.5px;top:181.46px;font-size:15.4px;letter-spacing:0.729px;line-height:20px">Configuration</span>
<svg class="a" style="left:1545px;top:208px" width="9" height="14"><path d="M1 1L7.5 7L1 13Z" fill="none" stroke="#1e1e1e" stroke-width="1.4"/></svg>
<svg class="a" style="left:1563px;top:210px" width="8" height="11" viewBox="0 0 8 11"><path d="M2 5V3.2A2 2 0 0 1 6 3.2V5" fill="none" stroke="#1f7ad0" stroke-width="1.3"/><rect x="0.8" y="5" width="6.4" height="5.2" fill="#fff" stroke="#1f7ad0" stroke-width="1.3"/></svg>
<svg class="a" style="left:1575px;top:206px" width="20" height="18"><path d="M7.4 5.6A3.9 4.3 0 1 0 7.4 12.4" fill="none" stroke="#3a9a3a" stroke-width="2"/><path d="M10.5 7H18M10.5 10.2H18M12.6 4.7V12.6M15.8 4.7V12.6" stroke="#3a9a3a" stroke-width="1.6"/></svg>
<span class="a ui" style="left:1599.2px;top:205.46px;font-size:15.4px;letter-spacing:0.412px;line-height:20px">Config.cs</span>
<svg class="a" style="left:1523px;top:235px" width="9" height="9"><path d="M8.5 0.5V8.5H0.5Z" fill="#1e1e1e"/></svg>
<svg class="a" style="left:1541px;top:234px" width="8" height="11" viewBox="0 0 8 11"><path d="M2 5V3.2A2 2 0 0 1 6 3.2V5" fill="none" stroke="#1f7ad0" stroke-width="1.3"/><rect x="0.8" y="5" width="6.4" height="5.2" fill="#fff" stroke="#1f7ad0" stroke-width="1.3"/></svg>
<svg class="a" style="left:1553px;top:230px" width="19" height="17" viewBox="0 0 19 17"><path d="M1 2.5H7L8.5 4H18V15.5H1Z" fill="#dcb67a" stroke="#c28a1c" stroke-width="1.2"/><path d="M1 6H18" stroke="#c28a1c" stroke-width="1"/></svg>
<span class="a ui" style="left:1576.4px;top:229.46px;font-size:15.4px;letter-spacing:0.1px;line-height:20px">Data</span>
<svg class="a" style="left:1545px;top:256px" width="9" height="14"><path d="M1 1L7.5 7L1 13Z" fill="none" stroke="#1e1e1e" stroke-width="1.4"/></svg>
<svg class="a" style="left:1563px;top:258px" width="8" height="11" viewBox="0 0 8 11"><path d="M2 5V3.2A2 2 0 0 1 6 3.2V5" fill="none" stroke="#1f7ad0" stroke-width="1.3"/><rect x="0.8" y="5" width="6.4" height="5.2" fill="#fff" stroke="#1f7ad0" stroke-width="1.3"/></svg>
<svg class="a" style="left:1575px;top:254px" width="19" height="17" viewBox="0 0 19 17"><path d="M1 2.5H7L8.5 4H18V15.5H1Z" fill="#dcb67a" stroke="#c28a1c" stroke-width="1.2"/><path d="M1 6H18" stroke="#c28a1c" stroke-width="1"/></svg>
<span class="a ui" style="left:1599.2px;top:253.46px;font-size:15.4px;letter-spacing:1.033px;line-height:20px">Migrations</span>
<svg class="a" style="left:1545px;top:280px" width="9" height="14"><path d="M1 1L7.5 7L1 13Z" fill="none" stroke="#1e1e1e" stroke-width="1.4"/></svg>
<svg class="a" style="left:1563px;top:282px" width="8" height="11" viewBox="0 0 8 11"><path d="M2 5V3.2A2 2 0 0 1 6 3.2V5" fill="none" stroke="#1f7ad0" stroke-width="1.3"/><rect x="0.8" y="5" width="6.4" height="5.2" fill="#fff" stroke="#1f7ad0" stroke-width="1.3"/></svg>
<svg class="a" style="left:1575px;top:278px" width="20" height="18"><path d="M7.4 5.6A3.9 4.3 0 1 0 7.4 12.4" fill="none" stroke="#3a9a3a" stroke-width="2"/><path d="M10.5 7H18M10.5 10.2H18M12.6 4.7V12.6M15.8 4.7V12.6" stroke="#3a9a3a" stroke-width="1.6"/></svg>
<span class="a ui" style="left:1600.0px;top:277.46px;font-size:15.4px;letter-spacing:0.636px;line-height:20px">ApplicationDbContext.cs</span>
<svg class="a" style="left:1523px;top:307px" width="9" height="9"><path d="M8.5 0.5V8.5H0.5Z" fill="#1e1e1e"/></svg>
<svg class="a" style="left:1541px;top:306px" width="8" height="11" viewBox="0 0 8 11"><path d="M2 5V3.2A2 2 0 0 1 6 3.2V5" fill="none" stroke="#1f7ad0" stroke-width="1.3"/><rect x="0.8" y="5" width="6.4" height="5.2" fill="#fff" stroke="#1f7ad0" stroke-width="1.3"/></svg>
<svg class="a" style="left:1553px;top:302px" width="19" height="17" viewBox="0 0 19 17"><path d="M1 2.5H7L8.5 4H18V15.5H1Z" fill="#dcb67a" stroke="#c28a1c" stroke-width="1.2"/><path d="M1 6H18" stroke="#c28a1c" stroke-width="1"/></svg><svg class="a" style="left:1552px;top:310px" width="11" height="11"><rect x="0.7" y="0.7" width="9.6" height="9.6" fill="#fff" stroke="#424242" stroke-width="1.3"/><path d="M3 8L7.5 3.5M4.5 3.5H7.5V6.5" fill="none" stroke="#424242" stroke-width="1.2"/></svg>
<span class="a ui" style="left:1576.4px;top:301.46px;font-size:15.4px;letter-spacing:0.2px;line-height:20px">Extensions</span>
<svg class="a" style="left:1545px;top:328px" width="9" height="14"><path d="M1 1L7.5 7L1 13Z" fill="none" stroke="#1e1e1e" stroke-width="1.4"/></svg>
<svg class="a" style="left:1563px;top:330px" width="8" height="11" viewBox="0 0 8 11"><path d="M2 5V3.2A2 2 0 0 1 6 3.2V5" fill="none" stroke="#1f7ad0" stroke-width="1.3"/><rect x="0.8" y="5" width="6.4" height="5.2" fill="#fff" stroke="#1f7ad0" stroke-width="1.3"/></svg>
<svg class="a" style="left:1575px;top:326px" width="20" height="18"><path d="M7.4 5.6A3.9 4.3 0 1 0 7.4 12.4" fill="none" stroke="#3a9a3a" stroke-width="2"/><path d="M10.5 7H18M10.5 10.2H18M12.6 4.7V12.6M15.8 4.7V12.6" stroke="#3a9a3a" stroke-width="1.6"/></svg><svg class="a" style="left:1574px;top:334px" width="11" height="11"><rect x="0.7" y="0.7" width="9.6" height="9.6" fill="#fff" stroke="#424242" stroke-width="1.3"/><path d="M3 8L7.5 3.5M4.5 3.5H7.5V6.5" fill="none" stroke="#424242" stroke-width="1.2"/></svg>
<span class="a ui" style="left:1600.2px;top:325.46px;font-size:15.4px;letter-spacing:0.36px;line-height:20px">ActivityExtensions.cs</span>
<svg class="a" style="left:1545px;top:352px" width="9" height="14"><path d="M1 1L7.5 7L1 13Z" fill="none" stroke="#1e1e1e" stroke-width="1.4"/></svg>
<svg class="a" style="left:1563px;top:354px" width="8" height="11" viewBox="0 0 8 11"><path d="M2 5V3.2A2 2 0 0 1 6 3.2V5" fill="none" stroke="#1f7ad0" stroke-width="1.3"/><rect x="0.8" y="5" width="6.4" height="5.2" fill="#fff" stroke="#1f7ad0" stroke-width="1.3"/></svg>
<svg class="a" style="left:1575px;top:350px" width="20" height="18"><path d="M7.4 5.6A3.9 4.3 0 1 0 7.4 12.4" fill="none" stroke="#3a9a3a" stroke-width="2"/><path d="M10.5 7H18M10.5 10.2H18M12.6 4.7V12.6M15.8 4.7V12.6" stroke="#3a9a3a" stroke-width="1.6"/></svg><svg class="a" style="left:1574px;top:358px" width="11" height="11"><rect x="0.7" y="0.7" width="9.6" height="9.6" fill="#fff" stroke="#424242" stroke-width="1.3"/><path d="M3 8L7.5 3.5M4.5 3.5H7.5V6.5" fill="none" stroke="#424242" stroke-width="1.2"/></svg>
<span class="a ui" style="left:1599.0px;top:349.46px;font-size:15.4px;letter-spacing:0.554px;line-height:20px">MigrateDbContextExtensions.cs</span>
<svg class="a" style="left:1523px;top:376px" width="9" height="14"><path d="M1 1L7.5 7L1 13Z" fill="none" stroke="#1e1e1e" stroke-width="1.4"/></svg>
<svg class="a" style="left:1541px;top:378px" width="8" height="11" viewBox="0 0 8 11"><path d="M2 5V3.2A2 2 0 0 1 6 3.2V5" fill="none" stroke="#1f7ad0" stroke-width="1.3"/><rect x="0.8" y="5" width="6.4" height="5.2" fill="#fff" stroke="#1f7ad0" stroke-width="1.3"/></svg>
<svg class="a" style="left:1553px;top:374px" width="19" height="17" viewBox="0 0 19 17"><path d="M1 2.5H7L8.5 4H18V15.5H1Z" fill="#dcb67a" stroke="#c28a1c" stroke-width="1.2"/><path d="M1 6H18" stroke="#c28a1c" stroke-width="1"/></svg>
<span class="a ui" style="left:1576.4px;top:373.46px;font-size:15.4px;letter-spacing:1.26px;line-height:20px">Models</span>
<svg class="a" style="left:1523px;top:400px" width="9" height="14"><path d="M1 1L7.5 7L1 13Z" fill="none" stroke="#1e1e1e" stroke-width="1.4"/></svg>
<svg class="a" style="left:1541px;top:402px" width="8" height="11" viewBox="0 0 8 11"><path d="M2 5V3.2A2 2 0 0 1 6 3.2V5" fill="none" stroke="#1f7ad0" stroke-width="1.3"/><rect x="0.8" y="5" width="6.4" height="5.2" fill="#fff" stroke="#1f7ad0" stroke-width="1.3"/></svg>
<svg class="a" style="left:1553px;top:398px" width="19" height="17" viewBox="0 0 19 17"><path d="M1 2.5H7L8.5 4H18V15.5H1Z" fill="#dcb67a" stroke="#c28a1c" stroke-width="1.2"/><path d="M1 6H18" stroke="#c28a1c" stroke-width="1"/></svg>
<span class="a ui" style="left:1576.4px;top:397.46px;font-size:15.4px;letter-spacing:0.589px;line-height:20px">Quickstart</span>
<svg class="a" style="left:1523px;top:424px" width="9" height="14"><path d="M1 1L7.5 7L1 13Z" fill="none" stroke="#1e1e1e" stroke-width="1.4"/></svg>
<svg class="a" style="left:1541px;top:426px" width="8" height="11" viewBox="0 0 8 11"><path d="M2 5V3.2A2 2 0 0 1 6 3.2V5" fill="none" stroke="#1f7ad0" stroke-width="1.3"/><rect x="0.8" y="5" width="6.4" height="5.2" fill="#fff" stroke="#1f7ad0" stroke-width="1.3"/></svg>
<svg class="a" style="left:1553px;top:422px" width="19" height="17" viewBox="0 0 19 17"><path d="M1 2.5H7L8.5 4H18V15.5H1Z" fill="#dcb67a" stroke="#c28a1c" stroke-width="1.2"/><path d="M1 6H18" stroke="#c28a1c" stroke-width="1"/></svg>
<span class="a ui" style="left:1576.4px;top:421.46px;font-size:15.4px;letter-spacing:0.343px;line-height:20px">Services</span>
<svg class="a" style="left:1523px;top:448px" width="9" height="14"><path d="M1 1L7.5 7L1 13Z" fill="none" stroke="#1e1e1e" stroke-width="1.4"/></svg>
<svg class="a" style="left:1541px;top:450px" width="8" height="11" viewBox="0 0 8 11"><path d="M2 5V3.2A2 2 0 0 1 6 3.2V5" fill="none" stroke="#1f7ad0" stroke-width="1.3"/><rect x="0.8" y="5" width="6.4" height="5.2" fill="#fff" stroke="#1f7ad0" stroke-width="1.3"/></svg>
<svg class="a" style="left:1553px;top:446px" width="19" height="17" viewBox="0 0 19 17"><path d="M1 2.5H7L8.5 4H18V15.5H1Z" fill="#dcb67a" stroke="#c28a1c" stroke-width="1.2"/><path d="M1 6H18" stroke="#c28a1c" stroke-width="1"/></svg>
<span class="a ui" style="left:1577.4px;top:445.46px;font-size:15.4px;letter-spacing:0.3px;line-height:20px">Views</span>
<svg class="a" style="left:1541px;top:474px" width="8" height="11" viewBox="0 0 8 11"><path d="M2 5V3.2A2 2 0 0 1 6 3.2V5" fill="none" stroke="#1f7ad0" stroke-width="1.3"/><rect x="0.8" y="5" width="6.4" height="5.2" fill="#fff" stroke="#1f7ad0" stroke-width="1.3"/></svg>
<svg class="a" style="left:1554px;top:470px" width="16" height="18" viewBox="0 0 16 18"><path d="M1 1H10L15 6V17H1Z" fill="#f8f8f8" stroke="#616161" stroke-width="1.2"/><path d="M4 6H12M4 8.5H12M4 11H12M4 13.5H12" stroke="#9a9a9a" stroke-width="1"/></svg>
<span class="a ui" style="left:1576.4px;top:469.46px;font-size:15.4px;letter-spacing:0.956px;line-height:20px">.gitignore</span>
<svg class="a" style="left:1523px;top:499px" width="9" height="9"><path d="M8.5 0.5V8.5H0.5Z" fill="#1e1e1e"/></svg>
<svg class="a" style="left:1541px;top:498px" width="8" height="11" viewBox="0 0 8 11"><path d="M2 5V3.2A2 2 0 0 1 6 3.2V5" fill="none" stroke="#1f7ad0" stroke-width="1.3"/><rect x="0.8" y="5" width="6.4" height="5.2" fill="#fff" stroke="#1f7ad0" stroke-width="1.3"/></svg>
<svg class="a" style="left:1554px;top:495px" width="16" height="18" viewBox="0 0 16 18"><path d="M1.3 1.3H10L14.7 6V16.7H1.3Z" fill="#ebebeb" stroke="#616161" stroke-width="1.5" stroke-linejoin="round"/><path d="M6.6 7.2C5.6 7.2 5.3 7.6 5.3 8.5V9.8C5.3 10.5 4.9 10.9 4.2 10.9C4.9 10.9 5.3 11.3 5.3 12V13.3C5.3 14.2 5.6 14.6 6.6 14.6M9.6 7.2C10.6 7.2 10.9 7.6 10.9 8.5V9.8C10.9 10.5 11.3 10.9 12 10.9C11.3 10.9 10.9 11.3 10.9 12V13.3C10.9 14.2 10.6 14.6 9.6 14.6" fill="none" stroke="#303030" stroke-width="1.3"/></svg>
<span class="a ui" style="left:1576.4px;top:493.46px;font-size:15.4px;letter-spacing:0.64px;line-height:20px">appsettings.json</span>
<svg class="a" style="left:1562px;top:524px" width="10" height="8"><path d="M1 4L3.5 6.5L9 1" fill="none" stroke="#e0303a" stroke-width="1.5"/></svg>
<svg class="a" style="left:1576px;top:519px" width="16" height="18" viewBox="0 0 16 18"><path d="M1.3 1.3H10L14.7 6V16.7H1.3Z" fill="#ebebeb" stroke="#616161" stroke-width="1.5" stroke-linejoin="round"/><path d="M6.6 7.2C5.6 7.2 5.3 7.6 5.3 8.5V9.8C5.3 10.5 4.9 10.9 4.2 10.9C4.9 10.9 5.3 11.3 5.3 12V13.3C5.3 14.2 5.6 14.6 6.6 14.6M9.6 7.2C10.6 7.2 10.9 7.6 10.9 8.5V9.8C10.9 10.5 11.3 10.9 12 10.9C11.3 10.9 10.9 11.3 10.9 12V13.3C10.9 14.2 10.6 14.6 9.6 14.6" fill="none" stroke="#303030" stroke-width="1.3"/></svg>
<span class="a ui" style="left:1599.0px;top:517.46px;font-size:15.4px;letter-spacing:0.681px;line-height:20px">appsettings.Development.json</span>
<svg class="a" style="left:1541px;top:546px" width="8" height="11" viewBox="0 0 8 11"><path d="M2 5V3.2A2 2 0 0 1 6 3.2V5" fill="none" stroke="#1f7ad0" stroke-width="1.3"/><rect x="0.8" y="5" width="6.4" height="5.2" fill="#fff" stroke="#1f7ad0" stroke-width="1.3"/></svg>
<svg class="a" style="left:1554px;top:543px" width="16" height="18" viewBox="0 0 16 18"><path d="M1.3 1.3H10L14.7 6V16.7H1.3Z" fill="#ebebeb" stroke="#616161" stroke-width="1.5" stroke-linejoin="round"/><path d="M6.6 7.2C5.6 7.2 5.3 7.6 5.3 8.5V9.8C5.3 10.5 4.9 10.9 4.2 10.9C4.9 10.9 5.3 11.3 5.3 12V13.3C5.3 14.2 5.6 14.6 6.6 14.6M9.6 7.2C10.6 7.2 10.9 7.6 10.9 8.5V9.8C10.9 10.5 11.3 10.9 12 10.9C11.3 10.9 10.9 11.3 10.9 12V13.3C10.9 14.2 10.6 14.6 9.6 14.6" fill="none" stroke="#303030" stroke-width="1.3"/></svg>
<span class="a ui" style="left:1576.4px;top:541.46px;font-size:15.4px;letter-spacing:0.756px;line-height:20px">bundleconfig.json</span>
<svg class="a" style="left:1541px;top:570px" width="8" height="11" viewBox="0 0 8 11"><path d="M2 5V3.2A2 2 0 0 1 6 3.2V5" fill="none" stroke="#1f7ad0" stroke-width="1.3"/><rect x="0.8" y="5" width="6.4" height="5.2" fill="#fff" stroke="#1f7ad0" stroke-width="1.3"/></svg>
<svg class="a" style="left:1553px;top:566px" width="20" height="18"><path d="M7.4 5.6A3.9 4.3 0 1 0 7.4 12.4" fill="none" stroke="#3a9a3a" stroke-width="2"/><path d="M10.5 7H18M10.5 10.2H18M12.6 4.7V12.6M15.8 4.7V12.6" stroke="#3a9a3a" stroke-width="1.6"/></svg>
<span class="a ui" style="left:1576.4px;top:565.46px;font-size:15.4px;letter-spacing:0.221px;line-height:20px">GlobalUsings.cs</span>
<svg class="a" style="left:1541px;top:594px" width="8" height="11" viewBox="0 0 8 11"><path d="M2 5V3.2A2 2 0 0 1 6 3.2V5" fill="none" stroke="#1f7ad0" stroke-width="1.3"/><rect x="0.8" y="5" width="6.4" height="5.2" fill="#fff" stroke="#1f7ad0" stroke-width="1.3"/></svg>
<svg class="a" style="left:1554px;top:591px" width="16" height="18" viewBox="0 0 16 18"><path d="M1.3 1.3H10L14.7 6V16.7H1.3Z" fill="#ebebeb" stroke="#616161" stroke-width="1.5" stroke-linejoin="round"/><path d="M6.6 7.2C5.6 7.2 5.3 7.6 5.3 8.5V9.8C5.3 10.5 4.9 10.9 4.2 10.9C4.9 10.9 5.3 11.3 5.3 12V13.3C5.3 14.2 5.6 14.6 6.6 14.6M9.6 7.2C10.6 7.2 10.9 7.6 10.9 8.5V9.8C10.9 10.5 11.3 10.9 12 10.9C11.3 10.9 10.9 11.3 10.9 12V13.3C10.9 14.2 10.6 14.6 9.6 14.6" fill="none" stroke="#303030" stroke-width="1.3"/></svg>
<span class="a ui" style="left:1576.4px;top:589.46px;font-size:15.4px;letter-spacing:0.59px;line-height:20px">libman.json</span>
<div class="a" style="left:1466px;top:611px;width:392px;height:24px;background:#ccceDB"></div>
<svg class="a" style="left:1523px;top:616px" width="9" height="14"><path d="M1 1L7.5 7L1 13Z" fill="none" stroke="#1e1e1e" stroke-width="1.4"/></svg>
<svg class="a" style="left:1541px;top:618px" width="8" height="11" viewBox="0 0 8 11"><path d="M2 5V3.2A2 2 0 0 1 6 3.2V5" fill="none" stroke="#1f7ad0" stroke-width="1.3"/><rect x="0.8" y="5" width="6.4" height="5.2" fill="#fff" stroke="#1f7ad0" stroke-width="1.3"/></svg>
<svg class="a" style="left:1553px;top:614px" width="20" height="18"><path d="M7.4 5.6A3.9 4.3 0 1 0 7.4 12.4" fill="none" stroke="#3a9a3a" stroke-width="2"/><path d="M10.5 7H18M10.5 10.2H18M12.6 4.7V12.6M15.8 4.7V12.6" stroke="#3a9a3a" stroke-width="1.6"/></svg>
<span class="a ui" style="left:1576.4px;top:613.46px;font-size:15.4px;letter-spacing:0.444px;line-height:20px">Program.cs</span>
<svg class="a" style="left:1541px;top:642px" width="8" height="11" viewBox="0 0 8 11"><path d="M2 5V3.2A2 2 0 0 1 6 3.2V5" fill="none" stroke="#1f7ad0" stroke-width="1.3"/><rect x="0.8" y="5" width="6.4" height="5.2" fill="#fff" stroke="#1f7ad0" stroke-width="1.3"/></svg>
<svg class="a" style="left:1554px;top:638px" width="16" height="18" viewBox="0 0 16 18"><path d="M1 1H10L15 6V17H1Z" fill="#ececec" stroke="#616161" stroke-width="1.2"/></svg>
<span class="a ui" style="left:1577.4px;top:637.46px;font-size:15.4px;letter-spacing:0.8px;line-height:20px">tempkey.jwk</span>
<svg class="a" style="left:1523px;top:664px" width="9" height="14"><path d="M1 1L7.5 7L1 13Z" fill="none" stroke="#1e1e1e" stroke-width="1.4"/></svg>
<svg class="a" style="left:1541px;top:666px" width="8" height="11" viewBox="0 0 8 11"><path d="M2 5V3.2A2 2 0 0 1 6 3.2V5" fill="none" stroke="#1f7ad0" stroke-width="1.3"/><rect x="0.8" y="5" width="6.4" height="5.2" fill="#fff" stroke="#1f7ad0" stroke-width="1.3"/></svg>
<svg class="a" style="left:1553px;top:662px" width="20" height="18"><path d="M7.4 5.6A3.9 4.3 0 1 0 7.4 12.4" fill="none" stroke="#3a9a3a" stroke-width="2"/><path d="M10.5 7H18M10.5 10.2H18M12.6 4.7V12.6M15.8 4.7V12.6" stroke="#3a9a3a" stroke-width="1.6"/></svg>
<span class="a ui" style="left:1576.4px;top:661.46px;font-size:15.4px;letter-spacing:0.055px;line-height:20px">UsersSeed.cs</span>
<svg class="a" style="left:1500px;top:688px" width="9" height="14"><path d="M1 1L7.5 7L1 13Z" fill="none" stroke="#1e1e1e" stroke-width="1.4"/></svg>
<svg class="a" style="left:1518px;top:690px" width="8" height="11" viewBox="0 0 8 11"><path d="M2 5V3.2A2 2 0 0 1 6 3.2V5" fill="none" stroke="#1f7ad0" stroke-width="1.3"/><rect x="0.8" y="5" width="6.4" height="5.2" fill="#fff" stroke="#1f7ad0" stroke-width="1.3"/></svg>
<svg class="a" style="left:1530px;top:686px" width="20" height="18"><rect x="1.8" y="1.8" width="16.6" height="14.6" rx="1.6" fill="#e6e6e6" stroke="#717171" stroke-width="1.6"/><path d="M8.6 6.3A3.4 3.6 0 1 0 8.6 11.9" fill="none" stroke="#2e9a2e" stroke-width="1.5"/><path d="M10.4 7.6H15.6M10.4 10.4H15.6M12 5.6V12.4M14.2 5.6V12.4" stroke="#2e9a2e" stroke-width="1.3"/></svg>
<span class="a ui" style="left:1554.4px;top:685.46px;font-size:15.4px;letter-spacing:0.405px;line-height:20px">IntegrationEventLogEF</span>
<svg class="a" style="left:1500px;top:712px" width="9" height="14"><path d="M1 1L7.5 7L1 13Z" fill="none" stroke="#1e1e1e" stroke-width="1.4"/></svg>
<svg class="a" style="left:1518px;top:714px" width="8" height="11" viewBox="0 0 8 11"><path d="M2 5V3.2A2 2 0 0 1 6 3.2V5" fill="none" stroke="#1f7ad0" stroke-width="1.3"/><rect x="0.8" y="5" width="6.4" height="5.2" fill="#fff" stroke="#1f7ad0" stroke-width="1.3"/></svg>
<svg class="a" style="left:1529px;top:709px" width="22" height="23"><rect x="2.5" y="2.75" width="17" height="15" rx="1" fill="#e6e6e6" stroke="#5a5a5a" stroke-width="1.6"/><path d="M2.5 6.2H19.5" stroke="#5a5a5a" stroke-width="1.6"/><circle cx="6.5" cy="14" r="7" fill="#f5f5f5"/><circle cx="6.5" cy="14" r="6.1" fill="#1f7ad0"/><path d="M0.6 14H12.4M6.5 7.9V20.1M1.6 11H11.4M1.6 17H11.4" stroke="#fff" stroke-width="0.9"/><ellipse cx="6.5" cy="14" rx="2.6" ry="6.1" fill="none" stroke="#fff" stroke-width="0.9"/></svg>
<span class="a ui" style="left:1554.4px;top:709.46px;font-size:15.4px;letter-spacing:0.722px;line-height:20px">Mobile.Bff.Shopping</span>
<svg class="a" style="left:1500px;top:736px" width="9" height="14"><path d="M1 1L7.5 7L1 13Z" fill="none" stroke="#1e1e1e" stroke-width="1.4"/></svg>
<svg class="a" style="left:1518px;top:738px" width="8" height="11" viewBox="0 0 8 11"><path d="M2 5V3.2A2 2 0 0 1 6 3.2V5" fill="none" stroke="#1f7ad0" stroke-width="1.3"/><rect x="0.8" y="5" width="6.4" height="5.2" fill="#fff" stroke="#1f7ad0" stroke-width="1.3"/></svg>
<svg class="a" style="left:1529px;top:733px" width="22" height="23"><rect x="2.5" y="2.75" width="17" height="15" rx="1" fill="#e6e6e6" stroke="#5a5a5a" stroke-width="1.6"/><path d="M2.5 6.2H19.5" stroke="#5a5a5a" stroke-width="1.6"/><circle cx="6.5" cy="14" r="7" fill="#f5f5f5"/><circle cx="6.5" cy="14" r="6.1" fill="#1f7ad0"/><path d="M0.6 14H12.4M6.5 7.9V20.1M1.6 11H11.4M1.6 17H11.4" stroke="#fff" stroke-width="0.9"/><ellipse cx="6.5" cy="14" rx="2.6" ry="6.1" fill="none" stroke="#fff" stroke-width="0.9"/></svg>
<span class="a ui" style="left:1554.4px;top:733.46px;font-size:15.4px;letter-spacing:0.582px;line-height:20px">Ordering.API</span>
<svg class="a" style="left:1500px;top:760px" width="9" height="14"><path d="M1 1L7.5 7L1 13Z" fill="none" stroke="#1e1e1e" stroke-width="1.4"/></svg>
<svg class="a" style="left:1518px;top:762px" width="8" height="11" viewBox="0 0 8 11"><path d="M2 5V3.2A2 2 0 0 1 6 3.2V5" fill="none" stroke="#1f7ad0" stroke-width="1.3"/><rect x="0.8" y="5" width="6.4" height="5.2" fill="#fff" stroke="#1f7ad0" stroke-width="1.3"/></svg>
<svg class="a" style="left:1530px;top:758px" width="20" height="18"><rect x="1.8" y="1.8" width="16.6" height="14.6" rx="1.6" fill="#e6e6e6" stroke="#717171" stroke-width="1.6"/><path d="M8.6 6.3A3.4 3.6 0 1 0 8.6 11.9" fill="none" stroke="#2e9a2e" stroke-width="1.5"/><path d="M10.4 7.6H15.6M10.4 10.4H15.6M12 5.6V12.4M14.2 5.6V12.4" stroke="#2e9a2e" stroke-width="1.3"/></svg>
<span class="a ui" style="left:1554.4px;top:757.46px;font-size:15.4px;letter-spacing:0.714px;line-height:20px">Ordering.Domain</span>
<svg class="a" style="left:1500px;top:784px" width="9" height="14"><path d="M1 1L7.5 7L1 13Z" fill="none" stroke="#1e1e1e" stroke-width="1.4"/></svg>
<svg class="a" style="left:1518px;top:786px" width="8" height="11" viewBox="0 0 8 11"><path d="M2 5V3.2A2 2 0 0 1 6 3.2V5" fill="none" stroke="#1f7ad0" stroke-width="1.3"/><rect x="0.8" y="5" width="6.4" height="5.2" fill="#fff" stroke="#1f7ad0" stroke-width="1.3"/></svg>
<svg class="a" style="left:1530px;top:782px" width="20" height="18"><rect x="1.8" y="1.8" width="16.6" height="14.6" rx="1.6" fill="#e6e6e6" stroke="#717171" stroke-width="1.6"/><path d="M8.6 6.3A3.4 3.6 0 1 0 8.6 11.9" fill="none" stroke="#2e9a2e" stroke-width="1.5"/><path d="M10.4 7.6H15.6M10.4 10.4H15.6M12 5.6V12.4M14.2 5.6V12.4" stroke="#2e9a2e" stroke-width="1.3"/></svg>
<span class="a ui" style="left:1554.4px;top:781.46px;font-size:15.4px;letter-spacing:0.632px;line-height:20px">Ordering.Infrastructure</span>
<svg class="a" style="left:1500px;top:808px" width="9" height="14"><path d="M1 1L7.5 7L1 13Z" fill="none" stroke="#1e1e1e" stroke-width="1.4"/></svg>
<svg class="a" style="left:1518px;top:810px" width="8" height="11" viewBox="0 0 8 11"><path d="M2 5V3.2A2 2 0 0 1 6 3.2V5" fill="none" stroke="#1f7ad0" stroke-width="1.3"/><rect x="0.8" y="5" width="6.4" height="5.2" fill="#fff" stroke="#1f7ad0" stroke-width="1.3"/></svg>
<svg class="a" style="left:1530px;top:806px" width="20" height="18"><rect x="1.8" y="1.8" width="16.6" height="14.6" rx="1.6" fill="#e6e6e6" stroke="#717171" stroke-width="1.6"/><path d="M8.6 6.3A3.4 3.6 0 1 0 8.6 11.9" fill="none" stroke="#2e9a2e" stroke-width="1.5"/><path d="M10.4 7.6H15.6M10.4 10.4H15.6M12 5.6V12.4M14.2 5.6V12.4" stroke="#2e9a2e" stroke-width="1.3"/></svg>
<span class="a ui" style="left:1554.4px;top:805.46px;font-size:15.4px;letter-spacing:0.554px;line-height:20px">OrderProcessor</span>
<svg class="a" style="left:1500px;top:832px" width="9" height="14"><path d="M1 1L7.5 7L1 13Z" fill="none" stroke="#1e1e1e" stroke-width="1.4"/></svg>
<svg class="a" style="left:1518px;top:834px" width="8" height="11" viewBox="0 0 8 11"><path d="M2 5V3.2A2 2 0 0 1 6 3.2V5" fill="none" stroke="#1f7ad0" stroke-width="1.3"/><rect x="0.8" y="5" width="6.4" height="5.2" fill="#fff" stroke="#1f7ad0" stroke-width="1.3"/></svg>
<svg class="a" style="left:1529px;top:829px" width="22" height="23"><rect x="2.5" y="2.75" width="17" height="15" rx="1" fill="#e6e6e6" stroke="#5a5a5a" stroke-width="1.6"/><path d="M2.5 6.2H19.5" stroke="#5a5a5a" stroke-width="1.6"/><circle cx="6.5" cy="14" r="7" fill="#f5f5f5"/><circle cx="6.5" cy="14" r="6.1" fill="#1f7ad0"/><path d="M0.6 14H12.4M6.5 7.9V20.1M1.6 11H11.4M1.6 17H11.4" stroke="#fff" stroke-width="0.9"/><ellipse cx="6.5" cy="14" rx="2.6" ry="6.1" fill="none" stroke="#fff" stroke-width="0.9"/></svg>
<span class="a ui" style="left:1554.4px;top:829.46px;font-size:15.4px;letter-spacing:0.34px;line-height:20px">PaymentProcessor</span>
<svg class="a" style="left:1500px;top:856px" width="9" height="14"><path d="M1 1L7.5 7L1 13Z" fill="none" stroke="#1e1e1e" stroke-width="1.4"/></svg>
<svg class="a" style="left:1518px;top:858px" width="8" height="11" viewBox="0 0 8 11"><path d="M2 5V3.2A2 2 0 0 1 6 3.2V5" fill="none" stroke="#1f7ad0" stroke-width="1.3"/><rect x="0.8" y="5" width="6.4" height="5.2" fill="#fff" stroke="#1f7ad0" stroke-width="1.3"/></svg>
<svg class="a" style="left:1529px;top:853px" width="22" height="23"><rect x="2.5" y="2.75" width="17" height="15" rx="1" fill="#e6e6e6" stroke="#5a5a5a" stroke-width="1.6"/><path d="M2.5 6.2H19.5" stroke="#5a5a5a" stroke-width="1.6"/><circle cx="6.5" cy="14" r="7" fill="#f5f5f5"/><circle cx="6.5" cy="14" r="6.1" fill="#1f7ad0"/><path d="M0.6 14H12.4M6.5 7.9V20.1M1.6 11H11.4M1.6 17H11.4" stroke="#fff" stroke-width="0.9"/><ellipse cx="6.5" cy="14" rx="2.6" ry="6.1" fill="none" stroke="#fff" stroke-width="0.9"/></svg>
<span class="a ui" style="left:1555.4px;top:853.46px;font-size:15.4px;letter-spacing:1.18px;line-height:20px">WebApp</span>
<svg class="a" style="left:1500px;top:880px" width="9" height="14"><path d="M1 1L7.5 7L1 13Z" fill="none" stroke="#1e1e1e" stroke-width="1.4"/></svg>
<svg class="a" style="left:1518px;top:882px" width="8" height="11" viewBox="0 0 8 11"><path d="M2 5V3.2A2 2 0 0 1 6 3.2V5" fill="none" stroke="#1f7ad0" stroke-width="1.3"/><rect x="0.8" y="5" width="6.4" height="5.2" fill="#fff" stroke="#1f7ad0" stroke-width="1.3"/></svg>
<svg class="a" style="left:1529px;top:877px" width="22" height="23"><rect x="2.5" y="2.75" width="17" height="15" rx="1" fill="#e6e6e6" stroke="#5a5a5a" stroke-width="1.6"/><path d="M2.5 6.2H19.5" stroke="#5a5a5a" stroke-width="1.6"/><circle cx="6.5" cy="14" r="7" fill="#f5f5f5"/><circle cx="6.5" cy="14" r="6.1" fill="#1f7ad0"/><path d="M0.6 14H12.4M6.5 7.9V20.1M1.6 11H11.4M1.6 17H11.4" stroke="#fff" stroke-width="0.9"/><ellipse cx="6.5" cy="14" rx="2.6" ry="6.1" fill="none" stroke="#fff" stroke-width="0.9"/></svg>
<span class="a ui" style="left:1555.4px;top:877.46px;font-size:15.4px;letter-spacing:0.873px;line-height:20px">WebAppComponents</span>
<svg class="a" style="left:1500px;top:904px" width="9" height="14"><path d="M1 1L7.5 7L1 13Z" fill="none" stroke="#1e1e1e" stroke-width="1.4"/></svg>
<svg class="a" style="left:1518px;top:906px" width="8" height="11" viewBox="0 0 8 11"><path d="M2 5V3.2A2 2 0 0 1 6 3.2V5" fill="none" stroke="#1f7ad0" stroke-width="1.3"/><rect x="0.8" y="5" width="6.4" height="5.2" fill="#fff" stroke="#1f7ad0" stroke-width="1.3"/></svg>
<svg class="a" style="left:1529px;top:901px" width="22" height="23"><rect x="2.5" y="2.75" width="17" height="15" rx="1" fill="#e6e6e6" stroke="#5a5a5a" stroke-width="1.6"/><path d="M2.5 6.2H19.5" stroke="#5a5a5a" stroke-width="1.6"/><circle cx="6.5" cy="14" r="7" fill="#f5f5f5"/><circle cx="6.5" cy="14" r="6.1" fill="#1f7ad0"/><path d="M0.6 14H12.4M6.5 7.9V20.1M1.6 11H11.4M1.6 17H11.4" stroke="#fff" stroke-width="0.9"/><ellipse cx="6.5" cy="14" rx="2.6" ry="6.1" fill="none" stroke="#fff" stroke-width="0.9"/></svg>
<span class="a ui" style="left:1555.4px;top:901.46px;font-size:15.4px;letter-spacing:0.65px;line-height:20px">WebhookClient</span>
<svg class="a" style="left:1500px;top:928px" width="9" height="14"><path d="M1 1L7.5 7L1 13Z" fill="none" stroke="#1e1e1e" stroke-width="1.4"/></svg>
<svg class="a" style="left:1518px;top:930px" width="8" height="11" viewBox="0 0 8 11"><path d="M2 5V3.2A2 2 0 0 1 6 3.2V5" fill="none" stroke="#1f7ad0" stroke-width="1.3"/><rect x="0.8" y="5" width="6.4" height="5.2" fill="#fff" stroke="#1f7ad0" stroke-width="1.3"/></svg>
<svg class="a" style="left:1529px;top:925px" width="22" height="23"><rect x="2.5" y="2.75" width="17" height="15" rx="1" fill="#e6e6e6" stroke="#5a5a5a" stroke-width="1.6"/><path d="M2.5 6.2H19.5" stroke="#5a5a5a" stroke-width="1.6"/><circle cx="6.5" cy="14" r="7" fill="#f5f5f5"/><circle cx="6.5" cy="14" r="6.1" fill="#1f7ad0"/><path d="M0.6 14H12.4M6.5 7.9V20.1M1.6 11H11.4M1.6 17H11.4" stroke="#fff" stroke-width="0.9"/><ellipse cx="6.5" cy="14" rx="2.6" ry="6.1" fill="none" stroke="#fff" stroke-width="0.9"/></svg>
<span class="a ui" style="left:1555px;top:925px">Webhooks.API</span>
</div></div>
<!-- SE scrollbar -->
<svg class="a" style="left:1864px;top:187px" width="11" height="7"><path d="M0 6H11L5.5 0Z" fill="#868999"/></svg>
<div class="a" style="left:1864px;top:447px;width:11px;height:382px;background:#c2c3c9"></div>
<svg class="a" style="left:1864px;top:922px" width="11" height="7"><path d="M0 0H11L5.5 6Z" fill="#868999"/></svg>
<!-- SE bottom tabs -->
<div class="a" style="left:1465px;top:937px;width:149px;height:24px;background:#f5f5f5;border:1px solid #ccceDB;border-top:none"></div>
<span class="a ui" style="left:1472.0px;top:939.16px;font-size:15.4px;letter-spacing:0.1px;line-height:20px;color:#1f6fc4">解决方案资源管理器</span>
<span class="a ui" style="left:1620.0px;top:939.16px;font-size:15.4px;letter-spacing:0.56px;line-height:20px;">Git 更改</span>
<!-- properties side tab -->
<span class="a ui" style="left:1882px;top:93px;transform:rotate(90deg);font-size:15px;color:#424242">属性</span>
<div class="a" style="left:1912px;top:88px;width:8px;height:30px;background:#ccceDB"></div>
<div class="a" style="left:1908px;top:977px;width:8px;height:21px;background:#1ec8a0"></div>

<!-- ===== EDITOR ===== -->
<div id="editor">
  <div class="a" style="left:0;top:0;width:26px;height:796px;background:#e6e7ed"></div>
  <div id="lnum"><div class="ln" style="top:0.00px">1</div><div class="ln" style="top:25.70px">2</div><div class="ln" style="top:51.40px">3</div><div class="ln" style="top:77.10px">4</div><div class="ln" style="top:102.80px">5</div><div class="ln" style="top:128.50px">6</div><div class="ln" style="top:154.20px">7</div><div class="ln" style="top:179.90px">8</div><div class="ln" style="top:205.60px">9</div><div class="ln" style="top:231.30px">10</div><div class="ln" style="top:257.00px">11</div><div class="ln" style="top:282.70px">12</div><div class="ln" style="top:308.40px">13</div><div class="ln" style="top:359.80px">14</div><div class="ln" style="top:411.20px;color:#000">15</div><div class="ln" style="top:436.90px">16</div><div class="ln" style="top:462.60px">17</div><div class="ln" style="top:488.30px">18</div><div class="ln" style="top:514.00px">19</div><div class="ln" style="top:539.70px">20</div><div class="ln" style="top:565.40px">21</div><div class="ln" style="top:591.10px">22</div><div class="ln" style="top:616.80px">23</div><div class="ln" style="top:642.50px">24</div><div class="ln" style="top:668.20px">25</div><div class="ln" style="top:693.90px">26</div></div>
  
<!-- current line box -->
<div class="a" style="left:176px;top:413px;width:1241px;height:23px;border:2px solid #e6e6ec"></div>
<div id="code"><div class="cr" style="top:0.00px"><span class="c">// Licensed to the .NET Foundation under one or more agreements.</span></div>
<div class="cr" style="top:25.70px"><span class="c">// The .NET Foundation licenses this file to you under the MIT license.</span></div>
<div class="cr" style="top:51.40px"></div>
<div class="cr" style="top:77.10px"><span class="k">using</span> System.Diagnostics;</div>
<div class="cr" style="top:102.80px"><span class="k">using</span> System.Linq;</div>
<div class="cr" style="top:128.50px"></div>
<div class="cr" style="top:154.20px"><span class="k">namespace</span> Microsoft.Extensions.DependencyInjection</div>
<div class="cr" style="top:179.90px">{</div>
<div class="cr" style="top:205.60px">    <span class="k">internal</span> <span class="k">sealed</span> <span class="k">class</span> <span class="t">DefaultHttpClientBuilder</span> : <span class="t">IHttpClientBuilder</span></div>
<div class="cr" style="top:231.30px">    {</div>
<div class="cr" style="top:257.00px">        <span class="k">public</span> <span class="t">DefaultHttpClientBuilder</span>(<span class="t">IServiceCollection</span> <span class="l">services</span>, <span class="k">string</span> <span class="l">name</span>)</div>
<div class="cr" style="top:282.70px">        {</div>
<div class="cr" style="top:308.40px">            <span class="c">// The tracker references a descriptor. It marks the position of where default services are added to</span></div>
<div class="cr" style="top:334.10px">              <span class="c">the collection.</span></div>
<div class="cr" style="top:359.80px">            <span class="k">var</span> <span class="l">tracker</span> = (<span class="t">DefaultHttpClientConfigurationTracker</span>?)<span class="l">services</span>.<span class="m">Single</span>(<span class="l">sd</span> =&gt; <span class="l">sd</span>.ServiceType == <span class="k">typeof</span></div>
<div class="cr" style="top:385.50px">              (<span class="t">DefaultHttpClientConfigurationTracker</span>)).ImplementationInstance;</div>
<div class="cr" style="top:411.20px">            <span class="t">Debug</span>.<span class="m">Assert</span>(<span class="l">tracker</span> != <span class="k">null</span>);</div>
<div class="cr" style="top:436.90px"></div>
<div class="cr" style="top:462.60px">            Services = <span class="k">new</span> <span class="t">DefaultHttpClientBuilderServiceCollection</span>(<span class="l">services</span>, <span class="l">name</span> == <span class="k">null</span>, <span class="l">tracker</span>);</div>
<div class="cr" style="top:488.30px">            Name = <span class="l">name</span>!;</div>
<div class="cr" style="top:514.00px">        }</div>
<div class="cr" style="top:539.70px"></div>
<div class="cr" style="top:565.40px">        <span class="k">public</span> <span class="k">string</span> Name { <span class="k">get</span>; }</div>
<div class="cr" style="top:591.10px"></div>
<div class="cr" style="top:616.80px">        <span class="k">public</span> <span class="t">IServiceCollection</span> Services { <span class="k">get</span>; }</div>
<div class="cr" style="top:642.50px">    }</div>
<div class="cr" style="top:668.20px">}</div>
<div class="cr" style="top:693.90px"></div></div>
</div>

<!-- ===== EDITOR DECO ===== -->
<div class="a" style="left:9px;top:141px;width:1447px;height:2px;background:#ccceDB"></div>
<div class="a" style="left:8px;top:116px;width:1px;height:845px;background:#ccceDB"></div>

<div class="a" style="left:164px;top:167px;width:2px;height:26px;background:#a5a5a5"></div>
<div class="a" style="left:164px;top:248px;width:2px;height:23px;background:#a5a5a5"></div>
<div class="a" style="left:164px;top:322px;width:2px;height:28px;background:#a5a5a5"></div>
<div class="a" style="left:164px;top:371px;width:2px;height:29px;background:#a5a5a5"></div>
<div class="a" style="left:164px;top:424px;width:2px;height:285px;background:#a5a5a5"></div>
<div class="a" style="left:164px;top:731px;width:2px;height:105px;background:#a5a5a5"></div>
<div class="a" style="left:164px;top:192px;width:8px;height:2px;background:#a5a5a5"></div>
<div class="a" style="left:164px;top:270px;width:8px;height:2px;background:#a5a5a5"></div>
<div class="a" style="left:164px;top:681px;width:8px;height:2px;background:#a5a5a5"></div>
<div class="a" style="left:164px;top:758px;width:8px;height:2px;background:#a5a5a5"></div>
<div class="a" style="left:164px;top:810px;width:8px;height:2px;background:#a5a5a5"></div>
<div class="a" style="left:164px;top:835px;width:8px;height:2px;background:#a5a5a5"></div>
<svg class="a" style="left:158px;top:151px" width="15" height="9"><path d="M1 1.5L7.5 7.5L14 1.5" fill="none" stroke="#1e1e1e" stroke-width="1.4"/></svg>
<svg class="a" style="left:158px;top:228px" width="15" height="9"><path d="M1 1.5L7.5 7.5L14 1.5" fill="none" stroke="#1e1e1e" stroke-width="1.4"/></svg>
<svg class="a" style="left:158px;top:305px" width="15" height="9"><path d="M1 1.5L7.5 7.5L14 1.5" fill="none" stroke="#1e1e1e" stroke-width="1.4"/></svg>
<svg class="a" style="left:158px;top:357px" width="15" height="9"><path d="M1 1.5L7.5 7.5L14 1.5" fill="none" stroke="#1e1e1e" stroke-width="1.4"/></svg>
<svg class="a" style="left:158px;top:408px" width="15" height="9"><path d="M1 1.5L7.5 7.5L14 1.5" fill="none" stroke="#1e1e1e" stroke-width="1.4"/></svg>
<svg class="a" style="left:158px;top:717px" width="15" height="9"><path d="M1 1.5L7.5 7.5L14 1.5" fill="none" stroke="#1e1e1e" stroke-width="1.4"/></svg>
<div class="a" style="left:190.5px;top:351px;width:1px;height:459px;background:repeating-linear-gradient(#c4c4c4 0 5.5px,transparent 5.5px 9px)"></div>
<div class="a" style="left:234.5px;top:403px;width:1px;height:384px;background:repeating-linear-gradient(#c4c4c4 0 5.5px,transparent 5.5px 9px)"></div>
<div class="a" style="left:277.5px;top:455px;width:1px;height:202px;background:repeating-linear-gradient(#c4c4c4 0 5.5px,transparent 5.5px 9px)"></div>
<div class="a" style="left:277.5px;top:738px;width:1px;height:24px;background:repeating-linear-gradient(#c4c4c4 0 5.5px,transparent 5.5px 9px)"></div>
<svg class="a" style="left:37px;top:354px" width="24" height="14"><rect x="0.5" y="0.5" width="13" height="13" fill="#3a7ec2"/><path d="M4.5 3H9.5M4.5 11H9.5M7 3V11" stroke="#fff" stroke-width="1.4"/><path d="M19.5 13.5V2M16.5 5L19.5 1.5L22.5 5" fill="none" stroke="#1e1e1e" stroke-width="1.4"/></svg>
<svg class="a" style="left:37px;top:714px" width="24" height="14"><rect x="0.5" y="0.5" width="13" height="13" fill="#3a7ec2"/><path d="M4.5 3H9.5M4.5 11H9.5M7 3V11" stroke="#fff" stroke-width="1.4"/><path d="M19.5 13.5V2M16.5 5L19.5 1.5L22.5 5" fill="none" stroke="#1e1e1e" stroke-width="1.4"/></svg>
<svg class="a" style="left:37px;top:765px" width="24" height="14"><rect x="0.5" y="0.5" width="13" height="13" fill="#3a7ec2"/><path d="M4.5 3H9.5M4.5 11H9.5M7 3V11" stroke="#fff" stroke-width="1.4"/><path d="M19.5 13.5V2M16.5 5L19.5 1.5L22.5 5" fill="none" stroke="#1e1e1e" stroke-width="1.4"/></svg>
<div class="a" style="left:639px;top:555px;width:2px;height:22px;background:#000"></div>
<svg class="a" style="left:1405px;top:450px" width="22" height="26"><path d="M7.8 10.6C12 10.2 16 10.6 18.5 12C20.5 13.2 19.5 15 16 15.8L12.5 16.4" fill="none" stroke="#2d8ab2" stroke-width="1.7"/><path d="M10.2 16.6L13.8 13.1V20.2Z" fill="#2d8ab2"/></svg>
<svg class="a" style="left:1405px;top:501.4px" width="22" height="26"><path d="M7.8 10.6C12 10.2 16 10.6 18.5 12C20.5 13.2 19.5 15 16 15.8L12.5 16.4" fill="none" stroke="#2d8ab2" stroke-width="1.7"/><path d="M10.2 16.6L13.8 13.1V20.2Z" fill="#2d8ab2"/></svg>
<!-- scrollbar -->
<div class="a" style="left:1427px;top:142px;width:29px;height:796px;background:#f3f3f3"></div>
<svg class="a" style="left:1436px;top:150px" width="11" height="7"><path d="M0 6H11L5.5 0Z" fill="#868999"/></svg>
<div class="a" style="left:1432px;top:165px;width:19px;height:382px;background:#c2c3c9"></div>
<svg class="a" style="left:1436px;top:923px" width="11" height="7"><path d="M0 0H11L5.5 6Z" fill="#868999"/></svg>
<div class="a" style="left:1427px;top:412px;width:29px;height:2px;background:#0000cd"></div>
<div class="a" style="left:1456px;top:116px;width:1px;height:845px;background:#ccceDB"></div>
<svg class="a" style="left:0;top:0" width="1920" height="1030"><rect x="211.5" y="336.5" width="1221" height="486" rx="3" fill="none" stroke="#ff2d2d" stroke-width="2.8"/></svg>

<!-- ===== IME OVERLAY ===== -->
<div class="a" style="left:1690px;top:998px;width:232px;height:33px;background:#fff;border:1px solid #b4cfe8;border-right:none;border-bottom:none"></div>
<div class="a" style="left:1673px;top:996px;width:33px;height:33px;background:#f25c22;border-radius:6px;transform:rotate(-16deg)"></div>
<span class="a" style="left:1676px;top:995px;font-size:34px;font-weight:bold;font-style:italic;color:#fff;transform:rotate(-12deg);font-family:'Liberation Sans',sans-serif">S</span>
<span class="a" style="left:1715px;top:1004px;font-size:19px;color:#1565d8;font-weight:bold">中</span>
<svg class="a" style="left:1746px;top:1007px" width="18" height="16"><circle cx="4.8" cy="4.3" r="2.2" fill="none" stroke="#1565d8" stroke-width="1.6"/><path d="M13.5 6.5C15.5 6.5 15.8 8.5 15 10.5C14.3 12.3 13 13.5 11.5 14.2" fill="none" stroke="#1565d8" stroke-width="2.4"/><circle cx="13.8" cy="7.8" r="1.9" fill="#1565d8"/></svg>
<svg class="a" style="left:1776px;top:1004px" width="17" height="21"><rect x="5" y="1" width="7" height="12" rx="3.5" fill="#1565d8"/><path d="M2 9C2 13 5 15.5 8.5 15.5C12 15.5 15 13 15 9M8.5 15.5V19.5M5 19.5H12" fill="none" stroke="#1565d8" stroke-width="1.6"/></svg>
<svg class="a" style="left:1805px;top:1006px" width="20" height="17"><rect x="1" y="1" width="18" height="15" rx="2" fill="none" stroke="#1565d8" stroke-width="1.6"/><path d="M4 5H16M4 8.5H16M4 12H16M7 4V13M10 4V13M13 4V13" stroke="#1565d8" stroke-width="1.3"/></svg>
<svg class="a" style="left:1832px;top:1005px" width="23" height="20"><path d="M6 1L1 4L3 9H6V19H17V9H20L22 4L17 1C16 3 14 4 11.5 4C9 4 7 3 6 1Z" fill="#f5441e"/></svg>
<svg class="a" style="left:1867px;top:1007px" width="18" height="17"><rect x="1" y="1" width="7" height="7" rx="1.5" fill="#1565d8"/><rect x="10" y="1" width="7" height="7" rx="1.5" fill="none" stroke="#1565d8" stroke-width="1.8"/><rect x="1" y="9.5" width="7" height="7" rx="1.5" fill="#1565d8"/><rect x="10" y="9.5" width="7" height="7" rx="1.5" fill="#1565d8"/></svg>
<svg class="a" style="left:1892px;top:1000px" width="28" height="30"><circle cx="14" cy="16" r="13" fill="#fbfbfb" stroke="#eee"/><path d="M3 14C6 11 14 11 19 12C20 15 17 18 12 18C7 18 4 17 3 14Z" fill="#f06a28"/><circle cx="8" cy="16" r="1.3" fill="#222"/><path d="M24 4L25 7L28 8L25 9L24 12L23 9L20 8L23 7Z" fill="#ffd84a"/></svg>

</body></html>
